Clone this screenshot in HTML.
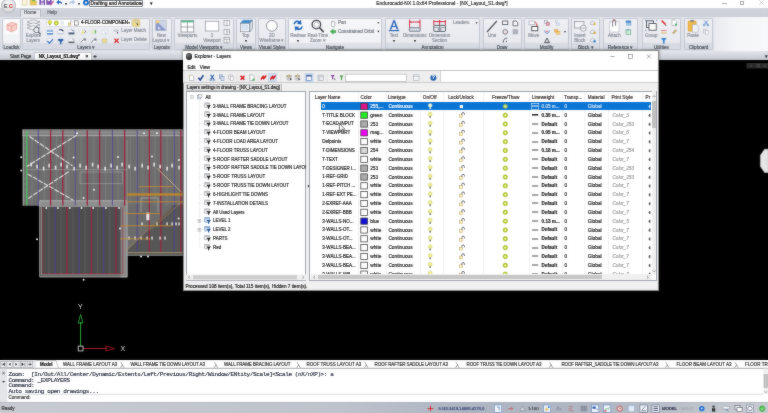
<!DOCTYPE html><html><head><meta charset="utf-8"><title>Endurocadd-NX</title><style>
*{margin:0;padding:0;box-sizing:border-box}
html,body{width:768px;height:413px;overflow:hidden;background:#000}
#pg{position:absolute;left:0;top:0;width:768px;height:413px;}
#ov{position:absolute;left:0;top:0;width:768px;height:413px;backdrop-filter:blur(0.8px);-webkit-backdrop-filter:blur(0.8px);opacity:0.35;pointer-events:none}
body{position:relative;will-change:transform;font-family:"Liberation Sans",sans-serif;font-size:4.5px;color:#222;line-height:1}
.a{position:absolute}
.t{position:absolute;white-space:nowrap;line-height:1;-webkit-text-stroke:0.18px currentColor}
.m{position:absolute;white-space:pre;line-height:1;font-family:"Liberation Mono",monospace;-webkit-text-stroke:0.15px currentColor}
#title{left:0;top:0;width:768px;height:7.5px;background:#fff}
#tabs{left:0;top:7.5px;width:768px;height:9px;background:linear-gradient(#d2d5dc,#cbced6)}
#ribbon{left:0;top:16.5px;width:768px;height:34.5px;background:linear-gradient(#e3e5eb,#dadde4)}
.panel{position:absolute;top:17.5px;height:32.8px;background:linear-gradient(#eff0f4 0,#e7e9ee 78%,#d8dbe3 80%,#d6dae2 100%);border:0.5px solid #c4c8d1;border-radius:1.2px}
#doctabs{left:0;top:51px;width:768px;height:8.7px;background:linear-gradient(#e2e5ea,#c4c8d1)}
</style></head><body><div id="pg">
<div id="title" class="a"></div>
<div id="tabs" class="a"></div>
<div id="ribbon" class="a"></div>
<div class="a" style="left:714.00px;top:16.50px;width:54.00px;height:34.50px;background:linear-gradient(90deg,#e8eaef,#f4f5f7 40%,#f7f8fa);"></div>
<div class="a" style="left:19.00px;top:0.00px;width:126.00px;height:6.60px;background:#f7f8fa;border-radius:0 0 2px 2px"></div>
<svg class="a" style="left:0;top:0" width="100" height="8" viewBox="0 0 100 8"><path d="M22.4 -1h3l1.6 1.6v4.4h-4.6z" fill="#fbf6dc" stroke="#c8b870" stroke-width="0.5"/><path d="M30.2 0h2.4l.8 1h3v4h-6.2z" fill="#eccb5a" stroke="#b89a30" stroke-width="0.4"/><path d="M32 -1.4l2.8-.4.6 2.6-2.8.4z" fill="#58b04a"/><rect x="39.8" y="-0.6" width="5" height="5.4" fill="#7b4fb0" stroke="#56308a" stroke-width="0.4"/><rect x="41" y="-0.6" width="2.6" height="2" fill="#e9e2f4"/><rect x="40.8" y="2.6" width="3" height="2.2" fill="#d8cdea"/><rect x="46.6" y="-0.6" width="4.6" height="5" fill="#7b4fb0" stroke="#56308a" stroke-width="0.4"/><rect x="47.6" y="-0.6" width="2.4" height="1.8" fill="#e9e2f4"/><path d="M50 5l3-4.4 1 .8-3 4.2z" fill="#c84a9a"/><path d="M56.4 2.2l2.4-2.6v1.6c2.4-.2 3.6 1 3.4 3.6-.6-1.4-1.6-2-3.4-1.8v1.8z" fill="#1f5fb4"/><path d="M75 2.2l-2.4-2.6v1.6c-2.4-.2-3.6 1-3.4 3.6.6-1.4 1.6-2 3.4-1.8v1.8z" fill="#a9c4e4"/><circle cx="86" cy="2.6" r="3" fill="#1f6fc8"/><circle cx="86" cy="2.6" r="1.1" fill="#e8f0fa"/></svg>
<div class="t" style="left:-34.50px;width:200px;text-align:center;top:2px;font-size:4px;color:#222;">▾</div>
<div class="t" style="left:-21.40px;width:200px;text-align:center;top:2px;font-size:4px;color:#222;">▾</div>
<div class="a" style="left:88.60px;top:0.30px;width:54.60px;height:6.90px;background:#fff;border:0.5px solid #7a808a;border-radius:1px"></div>
<div class="t" style="left:90.40px;top:2px;font-size:4.9px;color:#111;">Drafting and Annotation</div>
<div class="t" style="left:41.00px;width:200px;text-align:center;top:2px;font-size:4px;color:#111;">▾</div>
<div class="t" style="left:51.00px;width:200px;text-align:center;top:1px;font-size:5px;color:#111;">▾</div>
<div class="a" style="left:1px;top:-1.6px;width:15px;height:15px;border-radius:50%;background:radial-gradient(circle at 50% 40%,#fff,#d9dbe0 70%,#b9bcc4);border:0.5px solid #aeb2bb"></div>
<div class="t" style="left:-94.40px;width:200px;text-align:center;top:4px;font-size:5.6px;color:#6a6a6e;font-weight:bold">E</div>
<div class="t" style="left:-89.20px;width:200px;text-align:center;top:4px;font-size:5.6px;color:#d03a36;font-weight:bold">C</div>
<div class="t" style="left:342.00px;width:200px;text-align:center;top:2px;font-size:4.9px;color:#333;">Endurocadd-NX 1.0x64 Professional - [NX_Layout_S1.dwg*]</div>
<div class="a" style="left:721.50px;top:2.60px;width:5.00px;height:0.60px;background:#aaa;"></div>
<div class="a" style="left:740.00px;top:0.80px;width:4.00px;height:4.00px;background:transparent;border:0.55px solid #aaa"></div>
<svg class="a" style="left:758.50px;top:0.30px" width="5" height="5" viewBox="0 0 5 5"><path d="M0.3 0.3L4.7 4.7M4.7 0.3L0.3 4.7" stroke="#aaa" stroke-width="0.55"/></svg>
<div class="a" style="left:20.00px;top:9.00px;width:20.50px;height:7.60px;background:#e6e8ed;border-radius:1.2px 1.2px 0 0;border:0.4px solid #b4b9c4;border-bottom:none"></div>
<div class="t" style="left:-69.80px;width:200px;text-align:center;top:11px;font-size:4.7px;color:#5a5f68;">Home</div>
<div class="t" style="left:-48.00px;width:200px;text-align:center;top:11px;font-size:4.7px;color:#5a5f68;">Help</div>
<div class="panel" style="left:2px;width:19.2px;background:linear-gradient(#f6f7f9 0,#f1f2f5 78%,#dfe2e8 80%,#dde0e6 100%)"></div>
<div class="t" style="left:-88.40px;width:200px;text-align:center;top:46px;font-size:4.6px;color:#4c515a;">Loadlok</div>
<div class="panel" style="left:22.2px;width:128.0px"></div>
<div class="t" style="left:-13.80px;width:200px;text-align:center;top:46px;font-size:4.6px;color:#4c515a;">Layers ▾</div>
<div class="panel" style="left:152px;width:19.6px"></div>
<div class="t" style="left:61.80px;width:200px;text-align:center;top:46px;font-size:4.6px;color:#4c515a;">Layouts</div>
<div class="panel" style="left:174.2px;width:60.2px"></div>
<div class="t" style="left:104.30px;width:200px;text-align:center;top:46px;font-size:4.6px;color:#4c515a;">Model Viewports ▾</div>
<div class="panel" style="left:236.2px;width:19.6px"></div>
<div class="t" style="left:146.00px;width:200px;text-align:center;top:46px;font-size:4.6px;color:#4c515a;">Views</div>
<div class="panel" style="left:257.8px;width:28.6px"></div>
<div class="t" style="left:172.10px;width:200px;text-align:center;top:46px;font-size:4.6px;color:#4c515a;">Visual Styles</div>
<div class="panel" style="left:288.2px;width:93.4px;background:linear-gradient(#f6f7f9 0,#f1f2f5 78%,#dfe2e8 80%,#dde0e6 100%)"></div>
<div class="t" style="left:234.90px;width:200px;text-align:center;top:46px;font-size:4.6px;color:#4c515a;">Navigate</div>
<div class="panel" style="left:384.6px;width:95.8px"></div>
<div class="t" style="left:332.50px;width:200px;text-align:center;top:46px;font-size:4.6px;color:#4c515a;">Annotation</div>
<div class="panel" style="left:482.6px;width:39.0px"></div>
<div class="t" style="left:402.10px;width:200px;text-align:center;top:46px;font-size:4.6px;color:#4c515a;">Draw</div>
<div class="panel" style="left:524.4px;width:44.2px"></div>
<div class="t" style="left:446.50px;width:200px;text-align:center;top:46px;font-size:4.6px;color:#4c515a;">Modify</div>
<div class="panel" style="left:571.2px;width:29.2px"></div>
<div class="t" style="left:485.80px;width:200px;text-align:center;top:46px;font-size:4.6px;color:#4c515a;">Block ▾</div>
<div class="panel" style="left:603.2px;width:34.8px"></div>
<div class="t" style="left:520.60px;width:200px;text-align:center;top:46px;font-size:4.6px;color:#4c515a;">Reference ▾</div>
<div class="panel" style="left:641.6px;width:39.6px"></div>
<div class="t" style="left:561.40px;width:200px;text-align:center;top:46px;font-size:4.6px;color:#4c515a;">Utilities</div>
<div class="panel" style="left:684px;width:29.2px"></div>
<div class="t" style="left:598.60px;width:200px;text-align:center;top:46px;font-size:4.6px;color:#4c515a;">Clipboard</div>
<svg class="a" style="left:0;top:0.5px" width="768" height="52" viewBox="0 0 768 52"><rect x="4.6" y="18.6" width="14" height="14.4" rx="1" fill="#fbfbfc"/><path d="M7 23.5l5-2.2 4.6 1.6v5.4l-5 2.5-4.6-2z" fill="#f8cfc9" stroke="#e38a82" stroke-width="0.6"/><path d="M7 23.5l4.6 1.8 5-2.4M11.6 25.3v5.5" fill="none" stroke="#e38a82" stroke-width="0.6"/><rect x="8.4" y="25.6" width="2" height="1.6" fill="#fff" stroke="#e38a82" stroke-width="0.3"/><path d="M27 21l6.4-2.2 6.6 2.2-6.6 2.2z" fill="#f6f7f9" stroke="#747a86" stroke-width="0.55"/><path d="M27 23.9l6.4-2.2 6.6 2.2-6.6 2.2z" fill="#f6f7f9" stroke="#747a86" stroke-width="0.55"/><path d="M27 26.8l6.4-2.2 6.6 2.2-6.6 2.2z" fill="#f6f7f9" stroke="#747a86" stroke-width="0.55"/><circle cx="36.4" cy="29" r="2.7" fill="#eef1f5" stroke="#50565f" stroke-width="0.8"/><path d="M38.4 31l2.2 2.2" stroke="#50565f" stroke-width="1.1"/><rect x="46.6" y="18.8" width="84.6" height="6.4" fill="#fff" stroke="#b6bbc6" stroke-width="0.4"/><circle cx="49.8" cy="21.3" r="1.8" fill="#eef03a" stroke="#8a9020" stroke-width="0.45"/><rect x="49.1" y="22.8" width="1.4" height="1.3" fill="#8a8a70"/><circle cx="56.3" cy="22" r="2.1" fill="#cfe01a" stroke="#6f8a10" stroke-width="0.5"/><circle cx="56.3" cy="22" r="0.7" fill="#f5f9c0"/><path d="M61 20.5h2.4v3h-2.4z" fill="#e6e8ec" stroke="#c4c8d0" stroke-width="0.3"/><rect x="68.4" y="22" width="2.6" height="2.2" fill="#e8d98a" stroke="#8a7a30" stroke-width="0.3"/><path d="M70.4 22v-1.2a1 1 0 0 1 2 0" fill="none" stroke="#666" stroke-width="0.4"/><rect x="74.4" y="19.9" width="3.8" height="4.2" fill="#fff" stroke="#333" stroke-width="0.5"/><path d="M128 21.3h2.2l-1.1 1.6z" fill="#222"/><rect x="132.6" y="18.6" width="7.2" height="6.8" rx="0.8" fill="#f0dc8a" stroke="#c9ac4a" stroke-width="0.4"/><path d="M134 20.5l2.2-.8 2.2.8-2.2.8z" fill="#fff" stroke="#667" stroke-width="0.3"/><path d="M136.3 21.8l1 2.6.6-1 1 .1z" fill="#334"/><path d="M46.8 29.8l3.2-1.6 3.2 1.6v2.4l-3.2 1.6-3.2-1.6z" fill="#fbfcfe" stroke="#a9b3c4" stroke-width="0.4" opacity="1"/><path d="M47 29.400000000000002h6v1.2h-6zM47 32.2h6v1.3h-6z" fill="#3274c2"/><path d="M57.5 29.8l3.2-1.6 3.2 1.6v2.4l-3.2 1.6-3.2-1.6z" fill="#fbfcfe" stroke="#a9b3c4" stroke-width="0.4" opacity="1"/><path d="M59.1 28.400000000000002c2-.6 4-.2 4.6 1.6l-1 .4c-.8-1-2-1.4-3.6-1z" fill="#26344e"/><path d="M57.7 32.4h5.4" stroke="#8d9bb4" stroke-width="0.6"/><path d="M68.2 29.8l3.2-1.6 3.2 1.6v2.4l-3.2 1.6-3.2-1.6z" fill="#fbfcfe" stroke="#a9b3c4" stroke-width="0.4" opacity="1"/><path d="M68.60000000000001 31.400000000000002h5.8v2h-5.8z" fill="#4a5a78"/><path d="M71.4 28.8l2.6 1.6" stroke="#4a5a78" stroke-width="0.7"/><path d="M79.7 29.8l3.2-1.6 3.2 1.6v2.4l-3.2 1.6-3.2-1.6z" fill="#fbfcfe" stroke="#a9b3c4" stroke-width="0.4" opacity="0.8"/><circle cx="82.9" cy="31.2" r="1.5" fill="#e9df8a"/><path d="M84.30000000000001 29.2l1.6 1.4-1.6 1" fill="none" stroke="#4a5060" stroke-width="0.6"/><path d="M90.3 29.8l3.2-1.6 3.2 1.6v2.4l-3.2 1.6-3.2-1.6z" fill="#fbfcfe" stroke="#a9b3c4" stroke-width="0.4" opacity="0.8"/><circle cx="92.9" cy="31.0" r="1.5" fill="#dfe6a8"/><path d="M95.3 29.0v3.6" stroke="#5aa848" stroke-width="1.1"/><path d="M101.39999999999999 29.8l3.2-1.6 3.2 1.6v2.4l-3.2 1.6-3.2-1.6z" fill="#fbfcfe" stroke="#a9b3c4" stroke-width="0.4" opacity="0.7"/><path d="M103.6 30.2l2 1.6v1.6" fill="none" stroke="#a9c4e4" stroke-width="0.9"/><path d="M46.8 38.7l3.2-1.6 3.2 1.6v2.4l-3.2 1.6-3.2-1.6z" fill="#fbfcfe" stroke="#a9b3c4" stroke-width="0.4" opacity="1"/><path d="M47.4 39.900000000000006l2 2.2 3.4-3.8" fill="none" stroke="#2a6cc0" stroke-width="1.2"/><path d="M57.5 38.7l3.2-1.6 3.2 1.6v2.4l-3.2 1.6-3.2-1.6z" fill="#fbfcfe" stroke="#a9b3c4" stroke-width="0.4" opacity="1"/><path d="M58.1 37.900000000000006h5.2v1.6l-1.8 1.4v2l-1.4.6v-2.6l-2-1.4z" fill="#2c5ea8"/><path d="M68.2 38.7l3.2-1.6 3.2 1.6v2.4l-3.2 1.6-3.2-1.6z" fill="#fbfcfe" stroke="#a9b3c4" stroke-width="0.4" opacity="1"/><path d="M68.60000000000001 40.5h5.8v1.6h-5.8z" fill="#59616e"/><path d="M72.4 38.1l1.8 1.6" stroke="#59616e" stroke-width="0.6"/><path d="M79.7 38.7l3.2-1.6 3.2 1.6v2.4l-3.2 1.6-3.2-1.6z" fill="#fbfcfe" stroke="#a9b3c4" stroke-width="0.4" opacity="0.8"/><path d="M80.9 41.5l2.2-2.8 2.4.6M85.5 39.300000000000004l-.2-1.6-1.6.6" fill="none" stroke="#4e5564" stroke-width="0.8"/><path d="M90.3 38.7l3.2-1.6 3.2 1.6v2.4l-3.2 1.6-3.2-1.6z" fill="#fbfcfe" stroke="#a9b3c4" stroke-width="0.4" opacity="0.8"/><path d="M91.5 41.5l2.2-2.8 2.4.6M96.1 39.300000000000004l-.2-1.6-1.6.6" fill="none" stroke="#4e5564" stroke-width="0.8"/><path d="M101.39999999999999 38.7l3.2-1.6 3.2 1.6v2.4l-3.2 1.6-3.2-1.6z" fill="#fbfcfe" stroke="#a9b3c4" stroke-width="0.4" opacity="0.8"/><rect x="102.6" y="38.1" width="4" height="3.6" fill="#ecd98c" stroke="#c9b060" stroke-width="0.4"/><path d="M113.8 29.6l2.4-1 2.4 1-2.4 1z" fill="#eef1f6" stroke="#6f7b90" stroke-width="0.4"/><path d="M116.6 30.6l1 2.4.5-.9 1 .1z" fill="#445"/><path d="M114.4 37.6l4.2 4.2M118.6 37.6l-4.2 4.2" stroke="#d8262c" stroke-width="1.3"/><rect x="155.6" y="19.2" width="10.6" height="10.6" fill="#cdd5e6" stroke="#a0a9bc" stroke-width="0.5"/><path d="M156.4 20.4l9 8.6h-9z" fill="#8a98cc" stroke="#6a78aa" stroke-width="0.4"/><path d="M156 19.6h4l-1.2 2.4-2.8.4z" fill="#f0d27a"/><path d="M158 25.2l3.2 3h-3.2z" fill="#dfe5f2"/><rect x="181" y="19.4" width="12.8" height="11.6" fill="#fff" stroke="#666c76" stroke-width="0.6"/><rect x="181.3" y="19.7" width="12.2" height="1.7" fill="#4fb58a"/><path d="M187.4 21.4v9.6M181 26h12.8" stroke="#666c76" stroke-width="0.6"/><rect x="205.4" y="20.2" width="13.4" height="9.8" fill="#fff" stroke="#7a808b" stroke-width="0.6"/><rect x="224" y="19.299999999999997" width="5.6" height="5.2" fill="#fbfbfd" stroke="#6e747f" stroke-width="0.5"/><path d="M226.8 19.299999999999997v5.2" stroke="#6e747f" stroke-width="0.5"/><rect x="224" y="28.299999999999997" width="5.6" height="5.2" fill="#fbfbfd" stroke="#6e747f" stroke-width="0.5"/><path d="M226.8 28.299999999999997v5.2M226.8 30.9h2.8" stroke="#6e747f" stroke-width="0.5"/><rect x="224" y="36.699999999999996" width="5.6" height="5.2" fill="#fbfbfd" stroke="#6e747f" stroke-width="0.5"/><path d="M226.8 38.3v3.6M224 38.3h5.6" stroke="#6e747f" stroke-width="0.5"/><path d="M240.4 22.2l2.6-3h9.4l-2.6 3z" fill="#3f8fd2" stroke="#2a6fae" stroke-width="0.4"/><rect x="240.4" y="22.2" width="9.4" height="8.6" fill="#f3f6fa" stroke="#5a6373" stroke-width="0.5"/><path d="M249.8 22.2l2.6-3v8.4l-2.6 3.2z" fill="#dfe5ee" stroke="#5a6373" stroke-width="0.5"/><rect x="242.4" y="24" width="5" height="4.6" fill="#dbe6f3" stroke="#9fb2cc" stroke-width="0.3"/><circle cx="271.8" cy="24.8" r="5.4" fill="#fdfdfe" stroke="#666b74" stroke-width="0.7"/><path d="M293.4 23.2c.4-3 3.4-4.6 6.2-3l1.2-1.4.8 4.6-4.6-.4 1.2-1.3c-1.4-.8-2.8-.2-3.2 1.5z" fill="#1a63b8"/><path d="M302.8 25.6c-.4 3-3.4 4.6-6.2 3l-1.2 1.4-.8-4.6 4.6.4-1.2 1.3c1.4.8 2.8.2 3.2-1.5z" fill="#1a63b8"/><circle cx="316.4" cy="23.6" r="4.3" fill="#eef0f3" stroke="#484c54" stroke-width="1.3"/><circle cx="316.4" cy="23.6" r="2.4" fill="#fff" stroke="#9aa0aa" stroke-width="0.5"/><path d="M319.8 27l3.4 3.6" stroke="#484c54" stroke-width="1.8" stroke-linecap="round"/><path d="M331.4 24v-3.2h.9v-.7h.9v.4h.9v.5h.8v3.4l-.7 1.2h-2.2z" fill="#fff" stroke="#555" stroke-width="0.4"/><path d="M330.2 30.6l3-2.6v1.4h2.6v2.4h-2.6v1.4z" fill="#3fae4f" stroke="#2a8438" stroke-width="0.3"/><path d="M377.3 21.2h2.2l-1.1 1.6z" fill="#222"/><path d="M377.3 29.8h2.2l-1.1 1.6z" fill="#222"/><path d="M390 28.6l3.6-9.4h1l3.6 9.4h-1.5l-.9-2.6h-3.5l-.9 2.6zM392.7 24.9h2.7l-1.35-3.9z" fill="#2a62b8"/><rect x="388.8" y="29" width="10.4" height="1.2" fill="#2a62b8"/><path d="M390 28.6l3.6-9.4h1l3.6 9.4" fill="none" stroke="#2a62b8" stroke-width="0.5"/><path d="M409.6 18.6v8.2M420 18.6v8.2M409.6 21h10.4" stroke="#d42c44" stroke-width="1" fill="none"/><path d="M409.6 21l1.6-1v2zM420 21l-1.6-1v2z" fill="#d42c44"/><rect x="409.4" y="26.8" width="10.8" height="3.4" rx="0.5" fill="#dfe3ec" stroke="#4f5766" stroke-width="0.8"/><path d="M433.8 19v5M439.6 19v5M445.4 19v5M433.8 20.6h11.6" stroke="#d42c44" stroke-width="1" fill="none"/><path d="M437 20.6l1.4-.8v1.6zM442.2 20.6l-1.4-.8v1.6z" fill="#d42c44"/><rect x="433.8" y="24.4" width="11.6" height="6" rx="0.5" fill="#eef0f4" stroke="#3f4653" stroke-width="0.85"/><path d="M433.8 26.4h11.6M439.6 24.4v6" stroke="#4f5663" stroke-width="0.5"/><rect x="437.6" y="27.4" width="4" height="2" fill="#8a92a2"/><path d="M475.5 21.3h2.2l-1.1 1.6z" fill="#444"/><path d="M487 31l9.8-11" stroke="#555a64" stroke-width="1.3"/><rect x="502.6" y="20" width="5.2" height="3.6" fill="#fbfbfd" stroke="#4a4f5a" stroke-width="0.8"/><path d="M513 20h3l1.8 1.6v3.2h-4.8z" fill="#fbfbfd" stroke="#4a4f5a" stroke-width="0.8"/><circle cx="505.2" cy="30.9" r="2.3" fill="#fbfbfd" stroke="#4a4f5a" stroke-width="0.8"/><circle cx="505.2" cy="30.9" r="0.5" fill="#d04040"/><rect x="513" y="28.6" width="4.8" height="4.4" fill="#c8ccd4" stroke="#7f8591" stroke-width="0.4"/><path d="M513 30.1h4.8M513 31.6h4.8M514.6 28.6v4.4M516.2 28.6v4.4" stroke="#7f8591" stroke-width="0.3"/><path d="M503.2 41.6c0-3 1.4-4.4 4-4.6" fill="none" stroke="#4a4f5a" stroke-width="0.9"/><circle cx="506.4" cy="40.4" r="0.6" fill="#555b66"/><rect x="529" y="20" width="5.6" height="3.8" fill="#f6f7f9" stroke="#8a909b" stroke-width="0.5"/><rect x="531.8" y="25.6" width="6" height="4.2" fill="#fff" stroke="#2d3038" stroke-width="0.8"/><path d="M535.4 20.6l1.4 3.4" stroke="#d8303c" stroke-width="0.8"/><path d="M536 24.8l1.6-1.2-.2 1.8z" fill="#d8303c"/><rect x="544.4" y="19.6" width="3" height="3" fill="#e8eaf0" stroke="#7a8190" stroke-width="0.4"/><rect x="546.4" y="21.6" width="3" height="3" fill="#d6a0a8" stroke="#b0485a" stroke-width="0.4"/><rect x="555.2" y="19.8" width="2.6" height="2" fill="#eef0f4" stroke="#9aa3b5" stroke-width="0.3"/><rect x="556.8" y="22" width="3" height="2.4" fill="#dfe6f2" stroke="#8fa0c0" stroke-width="0.3"/><path d="M544.9 29.4a2.2 2.2 0 1 0 4.2 0" fill="none" stroke="#3a62b0" stroke-width="0.7"/><circle cx="547" cy="30.4" r="0.7" fill="#d8303c"/><rect x="554.6" y="28.6" width="3.4" height="2.6" fill="#f0b85a" stroke="#c88a2a" stroke-width="0.3"/><rect x="556.4" y="30.4" width="3.6" height="2.8" fill="#f6cf7a" stroke="#c88a2a" stroke-width="0.3"/><path d="M563.9 30.2h2.2l-1.1 1.6z" fill="#222"/><path d="M544.6 41.6l2.4-4.4 2.4 4.4z" fill="#e8eaee" stroke="#3a3f4a" stroke-width="0.9"/><rect x="574.4" y="20.4" width="9.6" height="6.6" fill="#f4f5f8" stroke="#6f7683" stroke-width="0.6"/><circle cx="583.2" cy="27.2" r="3" fill="#f4f5f8" stroke="#6f7683" stroke-width="0.6"/><path d="M581 27.2h4.4" stroke="#6f7683" stroke-width="0.5"/><path d="M590.4 23.5v-2.2l2.2-1.4 2.4 1.4v2.2z" fill="#e9ecf2" stroke="#7f8796" stroke-width="0.4"/><circle cx="594.6" cy="22.9" r="1.2" fill="#e8b84a"/><path d="M590.4 32.5v-2.2l2.2-1.4 2.4 1.4v2.2z" fill="#e9ecf2" stroke="#7f8796" stroke-width="0.4"/><circle cx="594.6" cy="31.9" r="1.2" fill="#d8a83a"/><path d="M590.4 40.9v-2.2l2.2-1.4 2.4 1.4v2.2z" fill="#e9ecf2" stroke="#7f8796" stroke-width="0.4"/><circle cx="594.6" cy="40.3" r="1.2" fill="#3a8ad8"/><rect x="609.6" y="20.8" width="9.4" height="10.2" fill="#fdfdfe" stroke="#a6acb8" stroke-width="0.5"/><path d="M612.6 25.6v-5.2a1.5 1.5 0 0 1 3 0v4.4" fill="none" stroke="#5a606c" stroke-width="0.8"/><rect x="613.4" y="18.6" width="1.4" height="1.4" fill="#c8404a"/><rect x="625.8" y="19.6" width="5.2" height="2" fill="#3a7ec8"/><rect x="626.8" y="21.8" width="4.2" height="2.4" fill="#9fc0e4" stroke="#3a7ec8" stroke-width="0.3"/><rect x="626" y="28.8" width="4.8" height="4.4" fill="#d0ead8" stroke="#3f9a6a" stroke-width="0.5"/><path d="M626.4 29.6a2 2 0 0 1 3 0" stroke="#2f7ab8" stroke-width="0.6" fill="none"/><rect x="646.4" y="19.8" width="7.2" height="6.6" fill="#e3e6ec" stroke="#3e434d" stroke-width="0.8"/><rect x="649" y="22.6" width="7.2" height="6.6" fill="#fff" stroke="#3e434d" stroke-width="0.8"/><rect x="645.2" y="18.8" width="1" height="1" fill="#4a6ab0"/><rect x="656.4" y="18.8" width="1" height="1" fill="#4a6ab0"/><rect x="645.2" y="29" width="1" height="1" fill="#4a6ab0"/><path d="M661.6 19.6l4 4" stroke="#d8303c" stroke-width="1.5"/><path d="M665.6 23.6l1 1.2-1.6-.4z" fill="#333"/><path d="M661 29.6h5.6" stroke="#d8303c" stroke-width="0.6"/><path d="M661 32h5.6" stroke="#e0a83a" stroke-width="0.8"/><path d="M661 37h5.6l-2 2.4v3h-1.6v-3z" fill="#2f7fd0"/><path d="M672 18.8h3l1.6 1.6v4.2h-4.6z" fill="#fff" stroke="#6a707c" stroke-width="0.4"/><circle cx="676" cy="23.6" r="1.1" fill="#3fae5a"/><path d="M672.4 31.8l3.6-3.2.8.8-3 3.4z" fill="#c8b06a" stroke="#8a7a40" stroke-width="0.3"/><rect x="688" y="20" width="8.2" height="10.2" rx="0.6" fill="#efb84a" stroke="#c98f2a" stroke-width="0.4"/><rect x="690.4" y="19" width="3.4" height="1.8" fill="#7a7f8a"/><path d="M692.4 23.4h4l2 2v5.8h-6z" fill="#eef2f8" stroke="#8a95aa" stroke-width="0.4"/><path d="M704 19.4l3.6 4M708 19.4l-3.6 4" stroke="#2f6fc0" stroke-width="0.7"/><circle cx="704.2" cy="24" r="0.9" fill="none" stroke="#2f6fc0" stroke-width="0.6"/><circle cx="707.8" cy="24" r="0.9" fill="none" stroke="#2f6fc0" stroke-width="0.6"/><rect x="703.6" y="28.2" width="3.2" height="3.8" fill="#e8eaee" stroke="#a0a6b2" stroke-width="0.4"/><rect x="705.2" y="29.6" width="3.2" height="3.8" fill="#f2f3f6" stroke="#a0a6b2" stroke-width="0.4"/></svg>
<div class="t" style="left:-66.70px;width:200px;text-align:center;top:34px;font-size:4.5px;color:#8a909a;">Explore</div>
<div class="t" style="left:-66.70px;width:200px;text-align:center;top:39px;font-size:4.5px;color:#8a909a;">Layers</div>
<div class="t" style="left:81.00px;top:21px;font-size:4.6px;color:#111;letter-spacing:-0.1px">4-FLOOR-COMPONEN</div>
<div class="t" style="left:121.30px;top:29px;font-size:4.5px;color:#8a909a;">Layer Match</div>
<div class="t" style="left:121.30px;top:38px;font-size:4.5px;color:#8a909a;">Layer Delete</div>
<div class="t" style="left:61.40px;width:200px;text-align:center;top:34px;font-size:4.5px;color:#8a909a;">New</div>
<div class="t" style="left:61.40px;width:200px;text-align:center;top:39px;font-size:4.5px;color:#8a909a;">Layout ▾</div>
<div class="t" style="left:87.40px;width:200px;text-align:center;top:34px;font-size:4.5px;color:#8a909a;">Viewports</div>
<div class="t" style="left:112.00px;width:200px;text-align:center;top:34px;font-size:4.5px;color:#8a909a;">1</div>
<div class="t" style="left:112.00px;width:200px;text-align:center;top:39px;font-size:4.5px;color:#8a909a;">Viewport</div>
<div class="t" style="left:145.60px;width:200px;text-align:center;top:34px;font-size:4.5px;color:#8a909a;">Top</div>
<div class="t" style="left:145.60px;width:200px;text-align:center;top:39px;font-size:4px;color:#222;">▾</div>
<div class="t" style="left:171.80px;width:200px;text-align:center;top:34px;font-size:4.5px;color:#8a909a;">2D</div>
<div class="t" style="left:172.00px;width:200px;text-align:center;top:39px;font-size:4.5px;color:#8a909a;">Wireframe ▾</div>
<div class="t" style="left:198.00px;width:200px;text-align:center;top:34px;font-size:4.5px;color:#8a909a;">Redraw</div>
<div class="t" style="left:198.00px;width:200px;text-align:center;top:39px;font-size:4px;color:#222;">▾</div>
<div class="t" style="left:217.80px;width:200px;text-align:center;top:34px;font-size:4.5px;color:#8a909a;">Real-Time</div>
<div class="t" style="left:218.00px;width:200px;text-align:center;top:39px;font-size:4.5px;color:#8a909a;">Zoom ▾</div>
<div class="t" style="left:338.00px;top:21px;font-size:4.6px;color:#727882;">Pan</div>
<div class="t" style="left:338.00px;top:30px;font-size:4.6px;color:#727882;">Constrained Orbit</div>
<div class="t" style="left:294.00px;width:200px;text-align:center;top:34px;font-size:4.5px;color:#8a909a;">Text</div>
<div class="t" style="left:294.00px;width:200px;text-align:center;top:39px;font-size:4px;color:#222;">▾</div>
<div class="t" style="left:314.80px;width:200px;text-align:center;top:34px;font-size:4.5px;color:#8a909a;">Dimensions</div>
<div class="t" style="left:314.80px;width:200px;text-align:center;top:39px;font-size:4px;color:#222;">▾</div>
<div class="t" style="left:339.60px;width:200px;text-align:center;top:34px;font-size:4.5px;color:#8a909a;">Dimension</div>
<div class="t" style="left:339.60px;width:200px;text-align:center;top:39px;font-size:4.5px;color:#8a909a;">Section</div>
<div class="t" style="left:453.00px;top:21px;font-size:4.5px;color:#8a909a;">Leaders</div>
<div class="t" style="left:392.00px;width:200px;text-align:center;top:34px;font-size:4.5px;color:#8a909a;">Line</div>
<div class="t" style="left:433.80px;width:200px;text-align:center;top:34px;font-size:4.5px;color:#8a909a;">Move</div>
<div class="t" style="left:479.80px;width:200px;text-align:center;top:34px;font-size:4.5px;color:#8a909a;">Insert</div>
<div class="t" style="left:479.80px;width:200px;text-align:center;top:39px;font-size:4.5px;color:#8a909a;">Block</div>
<div class="t" style="left:514.40px;width:200px;text-align:center;top:34px;font-size:4.5px;color:#8a909a;">Attach</div>
<div class="t" style="left:551.20px;width:200px;text-align:center;top:34px;font-size:4.5px;color:#8a909a;">Group</div>
<div class="t" style="left:593.00px;width:200px;text-align:center;top:34px;font-size:4.5px;color:#8a909a;">Paste</div>
<div id="doctabs" class="a"></div>
<div class="t" style="left:10.00px;top:55px;font-size:4.5px;color:#333;">Start Page</div>
<div class="a" style="left:34.00px;top:52.20px;width:57.50px;height:7.50px;background:linear-gradient(#ffffff,#f2f3f5);border:0.4px solid #c2c6ce;border-bottom:none;border-radius:1px 1px 0 0"></div>
<div class="t" style="left:38.70px;top:55px;font-size:4.5px;color:#111;font-weight:bold;letter-spacing:-0.15px">NX_Layout_S1.dwg*</div>
<div class="t" style="left:-13.20px;width:200px;text-align:center;top:54px;font-size:5.5px;color:#222;">×</div>
<div class="t" style="left:-5.00px;width:200px;text-align:center;top:53px;font-size:6px;color:#222;font-weight:bold">+</div>
<div class="t" style="left:666.00px;width:200px;text-align:center;top:55px;font-size:4.5px;color:#222;">▾</div>
<svg class="a" style="left:0;top:0" width="768" height="361" viewBox="0 0 768 361"><rect x="22.4" y="129.4" width="300" height="76.4" fill="#6e6e6e"/><rect x="22.4" y="129.4" width="300" height="6.4" fill="#838383"/><path d="M22.4 135.7h300" stroke="#b8b8b8" stroke-width="0.8"/><path d="M22.4 132.4h300" stroke="#9c9c9c" stroke-width="0.5"/><rect x="126" y="205" width="100" height="50.6" fill="#565656"/><path d="M127 205h46l-46 46z" fill="#6c6c6c"/><path d="M127 252.6h60" stroke="#c0a878" stroke-width="0.7"/><path d="M127 255.2h60" stroke="#c4c4c4" stroke-width="0.6"/><rect x="39.4" y="200.4" width="88" height="77" fill="#4e4e4e"/><rect x="39.4" y="200.4" width="88" height="6.6" fill="#8e8e8e"/><rect x="120.6" y="200.4" width="6.8" height="77" fill="#868686"/><path d="M39.8 200.8h87.2v76h-87.2z" fill="none" stroke="#bcbcbc" stroke-width="0.8"/><path d="M41.6 207.2v67.6h82.4v-67.6" fill="none" stroke="#a0a0a0" stroke-width="0.5"/><path d="M42.8 207.4v66.2h80v-66.2" fill="none" stroke="#a82038" stroke-width="0.7" opacity="0.85"/><path d="M31.9 134.6v71" stroke="#929292" stroke-width="0.6" opacity="0.6"/><path d="M38.0 134.6v71" stroke="#929292" stroke-width="0.6" opacity="0.6"/><path d="M44.2 134.6v71" stroke="#929292" stroke-width="0.6" opacity="0.6"/><path d="M50.3 134.6v71" stroke="#929292" stroke-width="0.6" opacity="0.6"/><path d="M56.5 134.6v71" stroke="#929292" stroke-width="0.6" opacity="0.6"/><path d="M62.6 134.6v71" stroke="#929292" stroke-width="0.6" opacity="0.6"/><path d="M68.8 134.6v71" stroke="#929292" stroke-width="0.6" opacity="0.6"/><path d="M75.0 134.6v71" stroke="#929292" stroke-width="0.6" opacity="0.6"/><path d="M81.1 134.6v71" stroke="#929292" stroke-width="0.6" opacity="0.6"/><path d="M87.3 134.6v71" stroke="#929292" stroke-width="0.6" opacity="0.6"/><path d="M93.4 134.6v71" stroke="#929292" stroke-width="0.6" opacity="0.6"/><path d="M99.6 134.6v71" stroke="#929292" stroke-width="0.6" opacity="0.6"/><path d="M105.7 134.6v71" stroke="#929292" stroke-width="0.6" opacity="0.6"/><path d="M111.9 134.6v71" stroke="#929292" stroke-width="0.6" opacity="0.6"/><path d="M118.0 134.6v71" stroke="#929292" stroke-width="0.6" opacity="0.6"/><path d="M124.2 134.6v71" stroke="#929292" stroke-width="0.6" opacity="0.6"/><path d="M130.3 134.6v71" stroke="#929292" stroke-width="0.6" opacity="0.6"/><path d="M136.5 134.6v71" stroke="#929292" stroke-width="0.6" opacity="0.6"/><path d="M142.6 134.6v71" stroke="#929292" stroke-width="0.6" opacity="0.6"/><path d="M148.8 134.6v71" stroke="#929292" stroke-width="0.6" opacity="0.6"/><path d="M154.9 134.6v71" stroke="#929292" stroke-width="0.6" opacity="0.6"/><path d="M161.1 134.6v71" stroke="#929292" stroke-width="0.6" opacity="0.6"/><path d="M167.2 134.6v71" stroke="#929292" stroke-width="0.6" opacity="0.6"/><path d="M173.4 134.6v71" stroke="#929292" stroke-width="0.6" opacity="0.6"/><path d="M179.5 134.6v71" stroke="#929292" stroke-width="0.6" opacity="0.6"/><path d="M185.7 134.6v71" stroke="#929292" stroke-width="0.6" opacity="0.6"/><path d="M50.6 130v75.6" stroke="#9c2440" stroke-width="1.3"/><path d="M62.8 130v75.6" stroke="#9c2440" stroke-width="1.3"/><path d="M87.3 130v75.6" stroke="#9c2440" stroke-width="1.3"/><path d="M99.6 130v75.6" stroke="#9c2440" stroke-width="1.3"/><path d="M124.6 130v75.6" stroke="#9c2440" stroke-width="1.3"/><path d="M149.3 130v75.6" stroke="#9c2440" stroke-width="1.3"/><path d="M160.8 130v75.6" stroke="#9c2440" stroke-width="1.3"/><path d="M180.8 130v75.6" stroke="#9c2440" stroke-width="1.3"/><path d="M38.3 130v75.6" stroke="#4e3e94" stroke-width="0.9" opacity="0.9"/><path d="M75.2 130v75.6" stroke="#4e3e94" stroke-width="0.9" opacity="0.9"/><path d="M112.4 130v75.6" stroke="#4e3e94" stroke-width="0.9" opacity="0.9"/><path d="M137.2 130v75.6" stroke="#4e3e94" stroke-width="0.9" opacity="0.9"/><path d="M174.2 130v75.6" stroke="#4e3e94" stroke-width="0.9" opacity="0.9"/><path d="M67 207v67" stroke="#9c2440" stroke-width="1.2"/><path d="M91.3 207v67" stroke="#9c2440" stroke-width="1.2"/><path d="M116 207v67" stroke="#9c2440" stroke-width="1.2"/><path d="M41.6 207.2v67.6h79" fill="none" stroke="#a0a0a0" stroke-width="0.5"/><path d="M55 207v67" stroke="#4e3e94" stroke-width="0.9"/><path d="M79 207v67" stroke="#4e3e94" stroke-width="0.9"/><path d="M103.7 207v67" stroke="#4e3e94" stroke-width="0.9"/><path d="M48.9 207v67" stroke="#7a7a7a" stroke-width="0.6" opacity="0.55"/><path d="M61 207v67" stroke="#7a7a7a" stroke-width="0.6" opacity="0.55"/><path d="M73 207v67" stroke="#7a7a7a" stroke-width="0.6" opacity="0.55"/><path d="M85.1 207v67" stroke="#7a7a7a" stroke-width="0.6" opacity="0.55"/><path d="M97.5 207v67" stroke="#7a7a7a" stroke-width="0.6" opacity="0.55"/><path d="M109.8 207v67" stroke="#7a7a7a" stroke-width="0.6" opacity="0.55"/><path d="M121 207v67" stroke="#7a7a7a" stroke-width="0.6" opacity="0.55"/><path d="M137.2 205v47" stroke="#4e3e94" stroke-width="0.9"/><path d="M174.2 205v47" stroke="#4e3e94" stroke-width="0.9"/><path d="M149.3 205v47" stroke="#9c2440" stroke-width="1.2"/><path d="M160.8 205v47" stroke="#9c2440" stroke-width="1.2"/><path d="M180.8 205v47" stroke="#9c2440" stroke-width="1.2"/><path d="M23.6 130v75.6" stroke="#c0c0c0" stroke-width="0.6"/><path d="M26.8 130.4v75.2" stroke="#4cc858" stroke-width="1.2"/><path d="M23 136h4" stroke="#4cc858" stroke-width="0.4"/><path d="M23 142h4" stroke="#4cc858" stroke-width="0.4"/><path d="M23 148h4" stroke="#4cc858" stroke-width="0.4"/><path d="M23 154h4" stroke="#4cc858" stroke-width="0.4"/><path d="M23 160h4" stroke="#4cc858" stroke-width="0.4"/><path d="M23 166h4" stroke="#4cc858" stroke-width="0.4"/><path d="M23 172h4" stroke="#4cc858" stroke-width="0.4"/><path d="M23 178h4" stroke="#4cc858" stroke-width="0.4"/><path d="M23 184h4" stroke="#4cc858" stroke-width="0.4"/><path d="M23 190h4" stroke="#4cc858" stroke-width="0.4"/><path d="M23 196h4" stroke="#4cc858" stroke-width="0.4"/><path d="M23 202h4" stroke="#4cc858" stroke-width="0.4"/><path d="M29.6 136.6L72.4 165.8M77 135L27 166.4M27.6 174L73 200M68.6 171.8L27.6 198.8" stroke="#e0dcdc" stroke-width="1.2" stroke-dasharray="5 1.2" fill="none"/><path d="M80 172h42.6v11.6h-42.6zM27 169.6h100M66 171.6v28M127 140v60" fill="none" stroke="#c8c8c8" stroke-width="0.5" opacity="0.7"/><path d="M141 212v-14h17v14" fill="none" stroke="#d0d0d0" stroke-width="0.6" opacity="0.8"/><rect x="30.3" y="162.7" width="1.6" height="3.8" fill="#f2f2f2" opacity="0.9"/><rect x="36.3" y="164.7" width="1.6" height="3.8" fill="#f2f2f2" opacity="0.9"/><rect x="42.8" y="166.7" width="1.6" height="3.8" fill="#f2f2f2" opacity="0.9"/><rect x="48.3" y="163.7" width="1.6" height="3.8" fill="#f2f2f2" opacity="0.9"/><rect x="54.8" y="165.7" width="1.6" height="3.8" fill="#f2f2f2" opacity="0.9"/><rect x="60.3" y="162.7" width="1.6" height="3.8" fill="#f2f2f2" opacity="0.9"/><rect x="66.3" y="164.7" width="1.6" height="3.8" fill="#f2f2f2" opacity="0.9"/><rect x="73.3" y="166.7" width="1.6" height="3.8" fill="#f2f2f2" opacity="0.9"/><rect x="79.3" y="163.7" width="1.6" height="3.8" fill="#f2f2f2" opacity="0.9"/><rect x="85.3" y="165.7" width="1.6" height="3.8" fill="#f2f2f2" opacity="0.9"/><rect x="91.8" y="162.7" width="1.6" height="3.8" fill="#f2f2f2" opacity="0.9"/><rect x="97.3" y="164.7" width="1.6" height="3.8" fill="#f2f2f2" opacity="0.9"/><rect x="104.3" y="166.7" width="1.6" height="3.8" fill="#f2f2f2" opacity="0.9"/><rect x="110.3" y="163.7" width="1.6" height="3.8" fill="#f2f2f2" opacity="0.9"/><rect x="116.3" y="165.7" width="1.6" height="3.8" fill="#f2f2f2" opacity="0.9"/><rect x="121.3" y="162.7" width="1.6" height="3.8" fill="#f2f2f2" opacity="0.9"/><rect x="128.3" y="164.7" width="1.6" height="3.8" fill="#f2f2f2" opacity="0.9"/><rect x="134.3" y="166.7" width="1.6" height="3.8" fill="#f2f2f2" opacity="0.9"/><rect x="141.3" y="163.7" width="1.6" height="3.8" fill="#f2f2f2" opacity="0.9"/><rect x="147.3" y="165.7" width="1.6" height="3.8" fill="#f2f2f2" opacity="0.9"/><rect x="153.3" y="162.7" width="1.6" height="3.8" fill="#f2f2f2" opacity="0.9"/><rect x="159.3" y="164.7" width="1.6" height="3.8" fill="#f2f2f2" opacity="0.9"/><rect x="166.3" y="166.7" width="1.6" height="3.8" fill="#f2f2f2" opacity="0.9"/><rect x="171.3" y="163.7" width="1.6" height="3.8" fill="#f2f2f2" opacity="0.9"/><rect x="178.3" y="165.7" width="1.6" height="3.8" fill="#f2f2f2" opacity="0.9"/><circle cx="46.3" cy="208" r="0.9" fill="#f4f4f4"/><circle cx="58" cy="208" r="0.9" fill="#f4f4f4"/><circle cx="69.8" cy="208" r="0.9" fill="#f4f4f4"/><circle cx="81.5" cy="208" r="0.9" fill="#f4f4f4"/><circle cx="93.2" cy="208" r="0.9" fill="#f4f4f4"/><circle cx="106" cy="208" r="0.9" fill="#f4f4f4"/><circle cx="119" cy="208" r="0.9" fill="#f4f4f4"/><rect x="141.4" y="222.4" width="1.3" height="3" fill="#f2f2f2"/><rect x="156.4" y="222.4" width="1.3" height="3" fill="#f2f2f2"/><rect x="166.4" y="222.4" width="1.3" height="3" fill="#f2f2f2"/><rect x="171.4" y="222.4" width="1.3" height="3" fill="#f2f2f2"/><rect x="175.4" y="222.4" width="1.3" height="3" fill="#f2f2f2"/><rect x="178.4" y="222.4" width="1.3" height="3" fill="#f2f2f2"/><rect x="128.4" y="236.6" width="1.3" height="3" fill="#f2f2f2"/><rect x="134.4" y="236.6" width="1.3" height="3" fill="#f2f2f2"/><rect x="140.4" y="236.6" width="1.3" height="3" fill="#f2f2f2"/><rect x="146.4" y="236.6" width="1.3" height="3" fill="#f2f2f2"/><rect x="151.4" y="236.6" width="1.3" height="3" fill="#f2f2f2"/><rect x="159.4" y="236.6" width="1.3" height="3" fill="#f2f2f2"/><rect x="164.4" y="236.6" width="1.3" height="3" fill="#f2f2f2"/><circle cx="77" cy="133.2" r="1" fill="#f0f0f0"/><circle cx="144" cy="133.3" r="1" fill="#f0f0f0"/><circle cx="157" cy="133.3" r="1" fill="#f0f0f0"/><circle cx="21.2" cy="157.2" r="1" fill="#f0f0f0"/><circle cx="21.2" cy="170.5" r="1" fill="#f0f0f0"/><circle cx="37" cy="239.3" r="1" fill="#f0f0f0"/><circle cx="83.6" cy="279.8" r="1" fill="#f0f0f0"/><circle cx="73.6" cy="157.6" r="1" fill="#f0f0f0"/><circle cx="118" cy="157" r="1" fill="#f0f0f0"/><circle cx="152" cy="156.6" r="1" fill="#f0f0f0"/><circle cx="179" cy="160" r="1" fill="#f0f0f0"/><circle cx="94" cy="189.8" r="1" fill="#f0f0f0"/><circle cx="120" cy="228.6" r="1" fill="#f0f0f0"/><circle cx="178.6" cy="218.4" r="1" fill="#f0f0f0"/><circle cx="83.6" cy="198" r="1" fill="#f0f0f0"/><circle cx="141" cy="256.6" r="1" fill="#f0f0f0"/><circle cx="148" cy="256.6" r="1" fill="#f0f0f0"/><rect x="146.4" y="212.6" width="3" height="7.6" fill="#f4f4f4" opacity="0.95"/><path d="M127 194.5h56" stroke="#c08a28" stroke-width="2.4" opacity="0.9"/><path d="M139 186.6h34M125 213.5h35M120.6 225.8h52M120 238.8h30M126 201.8h57" stroke="#c88c2c" stroke-width="0.9" opacity="0.9"/><path d="M157.2 168.5L181.4 192" stroke="#c8b48c" stroke-width="0.9" fill="none"/><path d="M183 201L150 230M125 251l47-43.4" stroke="#b89050" stroke-width="0.7" fill="none" opacity="0.8"/><path d="M80.6 346v-24" stroke="#30c040" stroke-width="0.9"/><path d="M78.2 323l2.4-8.4 2.4 8.4z" fill="none" stroke="#30c040" stroke-width="0.8"/><path d="M83 348.5h24" stroke="#b81c28" stroke-width="0.9"/><path d="M106 346l8.4 2.5-8.4 2.5z" fill="none" stroke="#b81c28" stroke-width="0.8"/><rect x="78.2" y="346.1" width="4.8" height="4.8" fill="none" stroke="#e8e8e8" stroke-width="0.8"/><path d="M768 149.2h-3.4l-4.2 6v11.2l4.2 6.2h3.4z" fill="#e6e6e6" stroke="#c4c4c4" stroke-width="0.6"/><path d="M764 160h4M765 164h3" stroke="#cfcfcf" stroke-width="0.5"/><rect x="746.4" y="63" width="22" height="5.4" fill="#2c2c2c"/><path d="M750 65.8h2.4M757 64.4h2.6v2.6h-2.6zM763.6 64.4l2.6 2.6M766.2 64.4l-2.6 2.6" stroke="#6e6e6e" stroke-width="0.45" fill="none"/></svg>
<div class="t" style="left:-19.60px;width:200px;text-align:center;top:303px;font-size:7px;color:#e0e0e0;-webkit-text-stroke:0">Y</div>
<div class="t" style="left:22.80px;width:200px;text-align:center;top:345px;font-size:7px;color:#e0e0e0;-webkit-text-stroke:0">X</div>
<div class="a" style="left:0.00px;top:360.40px;width:768.00px;height:7.80px;background:#fff;"></div>
<div class="a" style="left:0.00px;top:360.40px;width:36.00px;height:7.80px;background:#e8e9ec;"></div>
<svg class="a" style="left:0;top:0" width="768" height="413" viewBox="0 0 768 413"><defs><linearGradient id="sb" x1="0" x2="1"><stop offset="0" stop-color="#c8cbd2"/><stop offset="0.45" stop-color="#bec2cc"/><stop offset="0.6" stop-color="#adb4c2"/><stop offset="0.8" stop-color="#b1b7c4"/><stop offset="0.92" stop-color="#c0c4cc"/><stop offset="1" stop-color="#c8cad0"/></linearGradient></defs><rect x="0.6000000000000001" y="361.4" width="5.4" height="5.8" fill="#f6f6f8" stroke="#8a8e98" stroke-width="0.45"/><path d="M4.6 362.8l-1.8 1.5 1.8 1.5zM2.0 362.8v3" fill="#222" stroke="#222" stroke-width="0.4"/><rect x="7.0" y="361.4" width="5.4" height="5.8" fill="#f6f6f8" stroke="#8a8e98" stroke-width="0.45"/><path d="M10.6 362.8l-1.9 1.5 1.9 1.5z" fill="#222"/><rect x="13.6" y="361.4" width="5.4" height="5.8" fill="#f6f6f8" stroke="#8a8e98" stroke-width="0.45"/><path d="M15.399999999999999 362.8l1.9 1.5-1.9 1.5z" fill="#222"/><rect x="20.4" y="361.4" width="5.4" height="5.8" fill="#f6f6f8" stroke="#8a8e98" stroke-width="0.45"/><path d="M21.8 362.8l1.8 1.5-1.8 1.5zM24.4 362.8v3" fill="#222" stroke="#222" stroke-width="0.4"/><rect x="27.4" y="361.4" width="5.4" height="5.8" fill="#f6f6f8" stroke="#8a8e98" stroke-width="0.45"/><path d="M28.4 364.3h3.4M30.1 362.6v3.4" stroke="#222" stroke-width="0.7"/><path d="M36 360.6h20l2.6 7.4" fill="none" stroke="#666" stroke-width="0.4"/><path d="M120.80000000000001 362.2l3.2 5.6M122.60000000000001 364.6l-2.2 3.2" fill="none" stroke="#333" stroke-width="0.45"/><path d="M214.4 362.2l3.2 5.6M216.2 364.6l-2.2 3.2" fill="none" stroke="#333" stroke-width="0.45"/><path d="M297.0 362.2l3.2 5.6M298.8 364.6l-2.2 3.2" fill="none" stroke="#333" stroke-width="0.45"/><path d="M364.79999999999995 362.2l3.2 5.6M366.59999999999997 364.6l-2.2 3.2" fill="none" stroke="#333" stroke-width="0.45"/><path d="M456.0 362.2l3.2 5.6M457.8 364.6l-2.2 3.2" fill="none" stroke="#333" stroke-width="0.45"/><path d="M549.6 362.2l3.2 5.6M551.4000000000001 364.6l-2.2 3.2" fill="none" stroke="#333" stroke-width="0.45"/><path d="M665.8 362.2l3.2 5.6M667.6 364.6l-2.2 3.2" fill="none" stroke="#333" stroke-width="0.45"/><path d="M735.0 362.2l3.2 5.6M736.8000000000001 364.6l-2.2 3.2" fill="none" stroke="#333" stroke-width="0.45"/><rect x="0" y="368.2" width="768" height="33.8" fill="#fff"/><rect x="0" y="368.2" width="7.2" height="33.8" fill="#e4e5e9"/><path d="M0 368.2h768" stroke="#8a8e98" stroke-width="0.5"/><path d="M2.2 371.8l2.6 2.6M4.8 371.8l-2.6 2.6" stroke="#222" stroke-width="0.6"/><path d="M2.2 381h2.8l-1.4 1.8z" fill="#222"/><path d="M7.2 394.3h756" stroke="#b4b8c0" stroke-width="0.5"/><rect x="763.4" y="368.6" width="4.6" height="25.4" fill="#f0f0f0"/><rect x="764" y="374.6" width="3.6" height="13" fill="#c4c4c4" stroke="#8a8a8a" stroke-width="0.3"/><path d="M764.6 391.4l1.2 1.2 1.2-1.2" fill="none" stroke="#333" stroke-width="0.5"/><rect x="0" y="402" width="768" height="11" fill="#c3c7cf"/><rect x="0" y="402" width="768" height="0.6" fill="#9a9ea8"/><rect x="0" y="402.6" width="768" height="10.4" fill="url(#sb)"/><path d="M427.6 408.6h5.6M430.4 405.8v5.6" stroke="#e02020" stroke-width="0.9"/><rect x="494.6" y="405.0" width="7" height="7.2" fill="#f4f7fc" stroke="#5a86c8" stroke-width="0.5"/><path d="M497 407.0h2.2v3.6" fill="none" stroke="#2a5aa8" stroke-width="0.6"/><path d="M508 408.6h4.6M511 407.20000000000005l1.8 1.4-1.8 1.4" fill="none" stroke="#d84040" stroke-width="0.6"/><path d="M520 410.8l2.5-4.6 2.5 4.6z" fill="#dfe3ea" stroke="#6a7080" stroke-width="0.5"/><rect x="543.6" y="405.0" width="7" height="7.2" fill="#e8f0fa" stroke="#5a86c8" stroke-width="0.5"/><path d="M545 410.6l1.6-3.6 1.6 3.6z" fill="#e8c040"/><circle cx="548.8" cy="407.0" r="1" fill="#3a7ac8"/><path d="M556.4 410.6l1.6-4 1.6 4M560 407.6l1.4 3" fill="none" stroke="#6a7080" stroke-width="0.5"/><path d="M568.6 406.6h4.8M568.6 408.6h3M568.6 410.6h4.8" stroke="#c05050" stroke-width="0.5"/><path d="M581 406.20000000000005h5.6v4.8h-5.6zM581 407.8h5.6M581 409.40000000000003h5.6M582.8 406.20000000000005v4.8M584.8 406.20000000000005v4.8" fill="none" stroke="#5a606c" stroke-width="0.4"/><rect x="591.6" y="405.0" width="7.2" height="7.2" fill="#f2f6fc" stroke="#4a7ac0" stroke-width="0.5"/><rect x="603.6" y="405.0" width="7.2" height="7.2" fill="#f2f6fc" stroke="#4a7ac0" stroke-width="0.5"/><path d="M592.8 406.8h2.6v1.6h-2.6zM595.4 409.0h2.4" stroke="#1f4f9a" stroke-width="0.5" fill="#3a6ab8"/><path d="M604.6 411.0l2-3 1.4 1.6 1.8-2.6" fill="none" stroke="#3a9a4a" stroke-width="0.6"/><rect x="604.4" y="410.20000000000005" width="2" height="1.4" fill="#d84040"/><circle cx="619.8" cy="408.6" r="2.6" fill="#e9d8d8" stroke="#c03030" stroke-width="0.7"/><path d="M619.8 408.6v-1.6M619.8 408.6h1.4" stroke="#802020" stroke-width="0.4"/><rect x="628.2" y="405.40000000000003" width="6.4" height="6.4" fill="#e4ecf8" stroke="#8aa4cc" stroke-width="0.5"/><rect x="640" y="405.0" width="7.2" height="7.2" fill="#f4f6fa" stroke="#4a5a7a" stroke-width="0.5"/><path d="M641.6 410.6l3.6-4.4M642 410.8h4" stroke="#2a3a5a" stroke-width="0.6"/><rect x="652" y="405.0" width="7.2" height="7.2" fill="#f4f6fa" stroke="#4a5a7a" stroke-width="0.5"/><path d="M653.4 406.8h4.6M653.4 408.6h4.6M653.4 410.40000000000003h4.6" stroke="#2a3a5a" stroke-width="0.8"/><circle cx="701.8" cy="408.6" r="2.7" fill="#1f6fd0"/><circle cx="701.8" cy="408.6" r="1" fill="#cfe0f8"/><circle cx="713.6" cy="406.6" r="1.2" fill="#333"/><path d="M712 411.6v-3.4h3.2v3.4z" fill="#333"/><path d="M723 407.6a2 2 0 0 1 3.4-1 2 2 0 0 1 3 2.4h-6.4z" fill="#f4f6fa" stroke="#5a6a8a" stroke-width="0.4"/><path d="M726 409.20000000000005l2.4 2" stroke="#2a5aa8" stroke-width="0.7"/><rect x="735" y="405.6" width="5" height="4" fill="#f4f6fa" stroke="#3a4050" stroke-width="0.5"/><rect x="737" y="407.6" width="5" height="4" fill="#fff" stroke="#3a4050" stroke-width="0.5"/><rect x="746.4" y="405.0" width="7.2" height="7.2" fill="#eef2f8" stroke="#5a6a8a" stroke-width="0.5"/><circle cx="750" cy="408.6" r="2.2" fill="#fff" stroke="#3a4050" stroke-width="0.6"/><circle cx="762.2" cy="408.6" r="2.8" fill="#4fc04f" stroke="#2f8f2f" stroke-width="0.4"/><path d="M760.8 408.6l1 1.2 1.8-2.2" fill="none" stroke="#fff" stroke-width="0.6"/></svg>
<div class="t" style="left:40.00px;top:363px;font-size:4.5px;color:#111;font-weight:bold;letter-spacing:-0.1px">Model</div>
<div class="t" style="left:63.00px;top:363px;font-size:4.5px;color:#333;">WALL FRAME LAYOUT A3</div>
<div class="t" style="left:130.60px;top:363px;font-size:4.5px;color:#333;letter-spacing:-0.13px">WALL FRAME TIE DOWN LAYOUT A3</div>
<div class="t" style="left:224.00px;top:363px;font-size:4.5px;color:#333;letter-spacing:-0.13px">WALL FRAME BRACING LAYOUT</div>
<div class="t" style="left:306.40px;top:363px;font-size:4.5px;color:#333;">ROOF TRUSS LAYOUT A3</div>
<div class="t" style="left:374.60px;top:363px;font-size:4.5px;color:#333;letter-spacing:-0.13px">ROOF RAFTER SADDLE LAYOUT A3</div>
<div class="t" style="left:466.60px;top:363px;font-size:4.5px;color:#333;letter-spacing:-0.13px">ROOF TRUSS TIE DOWN LAYOUT A3</div>
<div class="t" style="left:561.40px;top:363px;font-size:4.5px;color:#333;letter-spacing:-0.13px">ROOF RAFTER_SADDLE TIE DOWN LAYOUT A3</div>
<div class="t" style="left:676.60px;top:363px;font-size:4.5px;color:#333;">FLOOR BEAM LAYOUT A3</div>
<div class="t" style="left:745.00px;top:363px;font-size:4.5px;color:#333;">FLOOR TRUSS LAYOUT A3</div>
<div class="m" style="left:8.60px;top:372px;font-size:6px;color:#1e2436;letter-spacing:-0.384px">Zoom:  [In/Out/All/Center/Dynamic/Extents/Left/Previous/Right/Window/ENtity/Scale]&lt;Scale (nX/nXP)&gt;: a</div>
<div class="m" style="left:8.60px;top:378px;font-size:6px;color:#1e2436;letter-spacing:-0.384px">Command: _EXPLAYERS</div>
<div class="m" style="left:8.60px;top:383px;font-size:6px;color:#1e2436;letter-spacing:-0.384px">Command:</div>
<div class="m" style="left:8.60px;top:389px;font-size:6px;color:#1e2436;letter-spacing:-0.384px">Auto saving open drawings...</div>
<div class="t" style="left:8.60px;top:396px;font-size:4.5px;color:#333;">Command:</div>
<div class="t" style="left:1.60px;top:407px;font-size:4.5px;color:#333;">Ready</div>
<div class="t" style="left:438.60px;top:407px;font-size:4.3px;color:#3b4a78;letter-spacing:-0.1px">5743.3419,14688.4278,0</div>
<div class="t" style="left:528.00px;top:407px;font-size:4.2px;color:#444;">1:100</div>
<div class="t" style="left:662.00px;top:407px;font-size:4.3px;color:#3a4258;font-weight:bold;letter-spacing:-0.1px">MODEL</div>
<div class="t" style="left:680.00px;top:407px;font-size:4.0px;color:#a4abb8;letter-spacing:-0.2px">TABLET</div>
<div class="a" style="left:182.60px;top:50.40px;width:476.00px;height:240.30px;background:#f0f0f0;box-shadow:0 0 2.5px rgba(0,0,0,.55);border:0.4px solid #8a8a8a"></div>
<div class="a" style="left:183.00px;top:50.80px;width:475.20px;height:11.40px;background:#fff;"></div>
<div class="a" style="left:183.00px;top:62.20px;width:475.20px;height:8.40px;background:#fff;"></div>
<div class="a" style="left:183.00px;top:70.30px;width:475.20px;height:12.70px;background:#fff;border-top:0.5px solid #c4c4c4;border-bottom:0.5px solid #cccccc"></div>
<div class="a" style="left:183.00px;top:70.80px;width:257.60px;height:11.70px;background:#eeeeee;border-right:0.4px solid #d0d0d0"></div>
<div class="a" style="left:185.6px;top:53.2px;width:6.4px;height:6.4px;border-radius:50%;background:radial-gradient(circle at 40% 35%,#777,#2b2b2b 60%,#111)"></div>
<div class="t" style="left:194.40px;top:55px;font-size:4.8px;color:#222;">Explorer - Layers</div>
<div class="t" style="left:187.40px;top:66px;font-size:4.7px;color:#222;">Edit</div>
<div class="t" style="left:199.80px;top:66px;font-size:4.7px;color:#222;">View</div>
<svg class="a" style="left:0;top:0" width="768" height="300" viewBox="0 0 768 300"><path d="M646.8 54.4l4 4M650.8 54.4l-4 4" stroke="#555" stroke-width="0.5"/><path d="M610.4 56.5h4.2" stroke="#555" stroke-width="0.5"/><rect x="628.7" y="54.5" width="3.8" height="3.8" fill="none" stroke="#555" stroke-width="0.5"/><path d="M189.6 75.10000000000001h2.6l1.6 1.6v3.8h-4.2z" fill="#fff" stroke="#7a7f88" stroke-width="0.45"/><path d="M189 74.7l1.6 1.2-1.8.6z" fill="#e8c84a"/><path d="M198.4 77.7l1.8 2.2 3.2-4.6" fill="none" stroke="#1a3f8a" stroke-width="1.5"/><path d="M206.6 74.10000000000001v8" stroke="#c9c9c9" stroke-width="0.4"/><path d="M210.6 74.7l3 4.4M213.8 74.7l-3 4.4" stroke="#2a5ea8" stroke-width="1.1"/><circle cx="210.6" cy="79.9" r="0.9" fill="none" stroke="#2a5ea8" stroke-width="0.6"/><circle cx="213.8" cy="79.9" r="0.9" fill="none" stroke="#2a5ea8" stroke-width="0.6"/><rect x="219.4" y="74.9" width="3" height="3.8" fill="#c9d6ea" stroke="#6f86ac" stroke-width="0.5"/><rect x="221" y="76.5" width="3" height="3.8" fill="#dbe4f2" stroke="#6f86ac" stroke-width="0.5"/><rect x="228.8" y="74.9" width="3.4" height="4.4" fill="#e9e9ec" stroke="#9a9aa2" stroke-width="0.4"/><rect x="230.6" y="76.7" width="2.8" height="3.6" fill="#fafafa" stroke="#9a9aa2" stroke-width="0.4"/><path d="M237 74.10000000000001v8" stroke="#c9c9c9" stroke-width="0.4"/><path d="M240.6 75.7l3.8 4M244.4 75.7l-3.8 4" stroke="#d4141c" stroke-width="1.5"/><path d="M249.8 74.9h2.6l1.6 1.6v4h-4.2z" fill="#fff" stroke="#6f757f" stroke-width="0.45"/><circle cx="253.6" cy="79.7" r="1.1" fill="#3fae5a"/><path d="M258 74.10000000000001v8" stroke="#c9c9c9" stroke-width="0.4"/><path d="M260.8 77.9l2.4-2.6 1 1.2 2-2v2.6l-2.4 2.6-1-1.2-2 2z" fill="#d8141c"/><rect x="268.6" y="73.7" width="8" height="8" fill="#cfe0f4" stroke="#8ab0dc" stroke-width="0.3"/><path d="M270.2 77.9l2.4-2.6 1 1.2 2-2v2.6l-2.4 2.6-1-1.2-2 2z" fill="#d8141c"/><path d="M281 74.10000000000001v8" stroke="#c9c9c9" stroke-width="0.4"/><path d="M286.4 76.10000000000001l2.6-1.2 2.6 1.2-2.6 1.2z" fill="#f2d878" stroke="#5a5f6a" stroke-width="0.5"/><path d="M286.4 77.7l2.6 1.2 2.6-1.2M286.4 79.10000000000001l2.6 1.2 2.6-1.2" fill="none" stroke="#6a6f7a" stroke-width="0.4"/><path d="M289.59999999999997 77.7l1 2.8.5-1 1.1.1z" fill="#223"/><path d="M294.8 76.10000000000001l2.6-1.2 2.6 1.2-2.6 1.2z" fill="#f2d878" stroke="#5a5f6a" stroke-width="0.5"/><path d="M294.8 77.7l2.6 1.2 2.6-1.2M294.8 79.10000000000001l2.6 1.2 2.6-1.2" fill="none" stroke="#6a6f7a" stroke-width="0.4"/><path d="M298.0 77.7l1 2.8.5-1 1.1.1z" fill="#223"/><rect x="305" y="73.7" width="8" height="8" fill="#cfe0f4" stroke="#8ab0dc" stroke-width="0.3"/><rect x="306.4" y="75.10000000000001" width="5.2" height="5.2" fill="#f4f6fa" stroke="#3a5f9a" stroke-width="0.5"/><rect x="306.4" y="75.10000000000001" width="5.2" height="1.4" fill="#3a5f9a"/><rect x="318" y="75.10000000000001" width="5.2" height="5.2" fill="#f0f1f4" stroke="#8a8f9a" stroke-width="0.5"/><path d="M318 76.7h5.2M319.6 76.7v3.6" stroke="#8a8f9a" stroke-width="0.4"/><path d="M327 74.10000000000001v8" stroke="#c9c9c9" stroke-width="0.4"/><path d="M330.8 74.9h3.8l-1.4 1.8v2.2l-1 .6v-2.8z" fill="#7a2a9a"/><path d="M333.8 78.10000000000001l1.6 2" stroke="#334" stroke-width="0.7"/><path d="M339.6 75.5h3.8l-1.4 1.9v2.4l-1 .6v-3z" fill="#3f9a3a"/><rect x="345.6" y="74.10000000000001" width="61" height="7.2" fill="#fff" stroke="#8f8f8f" stroke-width="0.45"/><rect x="413.6" y="74.9" width="5.4" height="5.6" fill="#f3f4f6" stroke="#8a909b" stroke-width="0.45"/><path d="M413.6 76.5h5.4" stroke="#8a909b" stroke-width="0.4"/><circle cx="433.4" cy="77.7" r="3" fill="#1f5fae"/></svg>
<div class="t" style="left:333.40px;width:200px;text-align:center;top:76px;font-size:4.6px;color:#fff;font-weight:bold">?</div>
<div class="a" style="left:185.60px;top:83.70px;width:96.00px;height:6.90px;background:#e9e9e9;border:0.4px solid #c4c4c4"></div>
<div class="t" style="left:187.00px;top:86px;font-size:4.5px;color:#222;letter-spacing:-0.12px">Layers settings in drawing - [NX_Layout_S1.dwg]</div>
<div class="a" style="left:185.80px;top:90.60px;width:120.60px;height:190.00px;background:#fff;border:0.45px solid #a0a5ad"></div>
<svg class="a" style="left:0;top:0" width="768" height="300" viewBox="0 0 768 300"><rect x="190.4" y="95.6" width="3" height="3" fill="#fff" stroke="#9a9a9a" stroke-width="0.4"/><path d="M191.1 97.1h1.6" stroke="#555" stroke-width="0.4"/><rect x="197.2" y="95.6" width="3.6" height="3.4" fill="#eef0f4" stroke="#7a808c" stroke-width="0.45"/><rect x="198.6" y="94.6" width="3.4" height="3" fill="#f6f7f9" stroke="#7a808c" stroke-width="0.45"/><path d="M199.4 100v147.4" stroke="#b5b5b5" stroke-width="0.4" stroke-dasharray="0.6 0.6"/><path d="M199.4 106.10h5" stroke="#b5b5b5" stroke-width="0.4" stroke-dasharray="0.6 0.6"/><rect x="204.8" y="102.90" width="4.6" height="4.4" fill="#f2f2f2" stroke="#8e9198" stroke-width="0.55"/><path d="M204.8 103.90h4.6" stroke="#8e9198" stroke-width="0.5"/><path d="M206.4 105.20h4.6l-1.8 2.1v1.3l-1 .6v-1.9z" fill="#1c1c1c"/><path d="M199.4 114.93h5" stroke="#b5b5b5" stroke-width="0.4" stroke-dasharray="0.6 0.6"/><rect x="204.8" y="111.73" width="4.6" height="4.4" fill="#f2f2f2" stroke="#8e9198" stroke-width="0.55"/><path d="M204.8 112.73h4.6" stroke="#8e9198" stroke-width="0.5"/><path d="M206.4 114.03h4.6l-1.8 2.1v1.3l-1 .6v-1.9z" fill="#1c1c1c"/><path d="M199.4 123.76h5" stroke="#b5b5b5" stroke-width="0.4" stroke-dasharray="0.6 0.6"/><rect x="204.8" y="120.56" width="4.6" height="4.4" fill="#f2f2f2" stroke="#8e9198" stroke-width="0.55"/><path d="M204.8 121.56h4.6" stroke="#8e9198" stroke-width="0.5"/><path d="M206.4 122.86h4.6l-1.8 2.1v1.3l-1 .6v-1.9z" fill="#1c1c1c"/><path d="M199.4 132.59h5" stroke="#b5b5b5" stroke-width="0.4" stroke-dasharray="0.6 0.6"/><rect x="204.8" y="129.39" width="4.6" height="4.4" fill="#f2f2f2" stroke="#8e9198" stroke-width="0.55"/><path d="M204.8 130.39h4.6" stroke="#8e9198" stroke-width="0.5"/><path d="M206.4 131.69h4.6l-1.8 2.1v1.3l-1 .6v-1.9z" fill="#1c1c1c"/><path d="M199.4 141.42h5" stroke="#b5b5b5" stroke-width="0.4" stroke-dasharray="0.6 0.6"/><rect x="204.8" y="138.22" width="4.6" height="4.4" fill="#f2f2f2" stroke="#8e9198" stroke-width="0.55"/><path d="M204.8 139.22h4.6" stroke="#8e9198" stroke-width="0.5"/><path d="M206.4 140.52h4.6l-1.8 2.1v1.3l-1 .6v-1.9z" fill="#1c1c1c"/><path d="M199.4 150.25h5" stroke="#b5b5b5" stroke-width="0.4" stroke-dasharray="0.6 0.6"/><rect x="204.8" y="147.05" width="4.6" height="4.4" fill="#f2f2f2" stroke="#8e9198" stroke-width="0.55"/><path d="M204.8 148.05h4.6" stroke="#8e9198" stroke-width="0.5"/><path d="M206.4 149.35h4.6l-1.8 2.1v1.3l-1 .6v-1.9z" fill="#1c1c1c"/><path d="M199.4 159.08h5" stroke="#b5b5b5" stroke-width="0.4" stroke-dasharray="0.6 0.6"/><rect x="204.8" y="155.88" width="4.6" height="4.4" fill="#f2f2f2" stroke="#8e9198" stroke-width="0.55"/><path d="M204.8 156.88h4.6" stroke="#8e9198" stroke-width="0.5"/><path d="M206.4 158.18h4.6l-1.8 2.1v1.3l-1 .6v-1.9z" fill="#1c1c1c"/><path d="M199.4 167.91h5" stroke="#b5b5b5" stroke-width="0.4" stroke-dasharray="0.6 0.6"/><rect x="204.8" y="164.71" width="4.6" height="4.4" fill="#f2f2f2" stroke="#8e9198" stroke-width="0.55"/><path d="M204.8 165.71h4.6" stroke="#8e9198" stroke-width="0.5"/><path d="M206.4 167.01h4.6l-1.8 2.1v1.3l-1 .6v-1.9z" fill="#1c1c1c"/><path d="M199.4 176.74h5" stroke="#b5b5b5" stroke-width="0.4" stroke-dasharray="0.6 0.6"/><rect x="204.8" y="173.54" width="4.6" height="4.4" fill="#f2f2f2" stroke="#8e9198" stroke-width="0.55"/><path d="M204.8 174.54h4.6" stroke="#8e9198" stroke-width="0.5"/><path d="M206.4 175.84h4.6l-1.8 2.1v1.3l-1 .6v-1.9z" fill="#1c1c1c"/><path d="M199.4 185.57h5" stroke="#b5b5b5" stroke-width="0.4" stroke-dasharray="0.6 0.6"/><rect x="204.8" y="182.37" width="4.6" height="4.4" fill="#f2f2f2" stroke="#8e9198" stroke-width="0.55"/><path d="M204.8 183.37h4.6" stroke="#8e9198" stroke-width="0.5"/><path d="M206.4 184.67h4.6l-1.8 2.1v1.3l-1 .6v-1.9z" fill="#1c1c1c"/><path d="M199.4 194.40h5" stroke="#b5b5b5" stroke-width="0.4" stroke-dasharray="0.6 0.6"/><rect x="204.8" y="191.20" width="4.6" height="4.4" fill="#f2f2f2" stroke="#8e9198" stroke-width="0.55"/><path d="M204.8 192.20h4.6" stroke="#8e9198" stroke-width="0.5"/><path d="M206.4 193.50h4.6l-1.8 2.1v1.3l-1 .6v-1.9z" fill="#1c1c1c"/><path d="M199.4 203.23h5" stroke="#b5b5b5" stroke-width="0.4" stroke-dasharray="0.6 0.6"/><rect x="204.8" y="200.03" width="4.6" height="4.4" fill="#f2f2f2" stroke="#8e9198" stroke-width="0.55"/><path d="M204.8 201.03h4.6" stroke="#8e9198" stroke-width="0.5"/><path d="M206.4 202.33h4.6l-1.8 2.1v1.3l-1 .6v-1.9z" fill="#1c1c1c"/><path d="M199.4 212.06h5" stroke="#b5b5b5" stroke-width="0.4" stroke-dasharray="0.6 0.6"/><rect x="204.8" y="208.86" width="4.6" height="4.4" fill="#f2f2f2" stroke="#8e9198" stroke-width="0.55"/><path d="M204.8 209.86h4.6" stroke="#8e9198" stroke-width="0.5"/><path d="M206.4 211.16h4.6l-1.8 2.1v1.3l-1 .6v-1.9z" fill="#1c1c1c"/><path d="M199.4 220.89h5" stroke="#b5b5b5" stroke-width="0.4" stroke-dasharray="0.6 0.6"/><rect x="204.8" y="217.69" width="4.6" height="4.4" fill="#dfeaf6" stroke="#4a7ab4" stroke-width="0.55"/><path d="M204.8 218.69h4.6" stroke="#4a7ab4" stroke-width="0.5"/><path d="M206.4 219.99h4.6l-1.8 2.1v1.3l-1 .6v-1.9z" fill="#1f4f8a"/><rect x="197.9" y="219.39" width="3" height="3" fill="#fff" stroke="#9a9a9a" stroke-width="0.4"/><path d="M198.6 220.89h1.6M199.4 220.09v1.6" stroke="#555" stroke-width="0.4"/><path d="M199.4 229.72h5" stroke="#b5b5b5" stroke-width="0.4" stroke-dasharray="0.6 0.6"/><rect x="204.8" y="226.52" width="4.6" height="4.4" fill="#dfeaf6" stroke="#4a7ab4" stroke-width="0.55"/><path d="M204.8 227.52h4.6" stroke="#4a7ab4" stroke-width="0.5"/><path d="M206.4 228.82h4.6l-1.8 2.1v1.3l-1 .6v-1.9z" fill="#1f4f8a"/><rect x="197.9" y="228.22" width="3" height="3" fill="#fff" stroke="#9a9a9a" stroke-width="0.4"/><path d="M198.6 229.72h1.6M199.4 228.92v1.6" stroke="#555" stroke-width="0.4"/><path d="M199.4 238.55h5" stroke="#b5b5b5" stroke-width="0.4" stroke-dasharray="0.6 0.6"/><rect x="204.8" y="235.35" width="4.6" height="4.4" fill="#f2f2f2" stroke="#8e9198" stroke-width="0.55"/><path d="M204.8 236.35h4.6" stroke="#8e9198" stroke-width="0.5"/><path d="M206.4 237.65h4.6l-1.8 2.1v1.3l-1 .6v-1.9z" fill="#1c1c1c"/><path d="M199.4 247.38h5" stroke="#b5b5b5" stroke-width="0.4" stroke-dasharray="0.6 0.6"/><rect x="204.8" y="244.18" width="4.6" height="4.4" fill="#f2f2f2" stroke="#8e9198" stroke-width="0.55"/><path d="M204.8 245.18h4.6" stroke="#8e9198" stroke-width="0.5"/><path d="M206.4 246.48h4.6l-1.8 2.1v1.3l-1 .6v-1.9z" fill="#1c1c1c"/><rect x="186.2" y="274.4" width="119.8" height="5.8" fill="#f0f0f0"/><rect x="193" y="275.2" width="104" height="4.2" fill="#cdcdcd"/><path d="M189.8 276l-1.4 1.3 1.4 1.3M302.4 276l1.4 1.3-1.4 1.3" fill="none" stroke="#555" stroke-width="0.6"/></svg>
<div class="a" style="left:186.2px;top:91px;width:119.8px;height:183.4px;overflow:hidden">
<div class="t" style="left:19.40px;top:5px;font-size:4.5px;color:#222;">All</div>
<div class="t" style="left:26.80px;top:14px;font-size:4.5px;color:#2a2a2a;">3-WALL FRAME BRACING LAYOUT</div>
<div class="t" style="left:26.80px;top:23px;font-size:4.5px;color:#2a2a2a;">3-WALL FRAME LAYOUT</div>
<div class="t" style="left:26.80px;top:31px;font-size:4.5px;color:#2a2a2a;">3-WALL FRAME TIE DOWN LAYOUT</div>
<div class="t" style="left:26.80px;top:40px;font-size:4.5px;color:#2a2a2a;">4-FLOOR BEAM LAYOUT</div>
<div class="t" style="left:26.80px;top:49px;font-size:4.5px;color:#2a2a2a;">4-FLOOR LOAD AREA LAYOUT</div>
<div class="t" style="left:26.80px;top:58px;font-size:4.5px;color:#2a2a2a;">4-FLOOR TRUSS LAYOUT</div>
<div class="t" style="left:26.80px;top:67px;font-size:4.5px;color:#2a2a2a;">5-ROOF RAFTER SADDLE LAYOUT</div>
<div class="t" style="left:26.80px;top:75px;font-size:4.5px;color:#2a2a2a;">5-ROOF RAFTER SADDLE TIE DOWN LAYOUT</div>
<div class="t" style="left:26.80px;top:84px;font-size:4.5px;color:#2a2a2a;">5-ROOF TRUSS LAYOUT</div>
<div class="t" style="left:26.80px;top:93px;font-size:4.5px;color:#2a2a2a;">5-ROOF TRUSS TIE DOWN LAYOUT</div>
<div class="t" style="left:26.80px;top:102px;font-size:4.5px;color:#2a2a2a;">6-HIGHLIGHT TIE DOWNS</div>
<div class="t" style="left:26.80px;top:111px;font-size:4.5px;color:#2a2a2a;">7-INSTALLATION DETAILS</div>
<div class="t" style="left:26.80px;top:120px;font-size:4.5px;color:#2a2a2a;">All Used Layers</div>
<div class="t" style="left:26.80px;top:128px;font-size:4.5px;color:#2a2a2a;">LEVEL 1</div>
<div class="t" style="left:26.80px;top:137px;font-size:4.5px;color:#2a2a2a;">LEVEL 2</div>
<div class="t" style="left:26.80px;top:146px;font-size:4.5px;color:#2a2a2a;">PARTS</div>
<div class="t" style="left:26.80px;top:155px;font-size:4.5px;color:#2a2a2a;">Red</div>
</div>
<div class="a" style="left:309.40px;top:90.60px;width:347.40px;height:190.00px;background:#fff;border:0.45px solid #a0a5ad"></div>
<div class="t" style="left:314.80px;top:96px;font-size:4.7px;color:#3a3230;">Layer Name</div>
<div class="t" style="left:360.60px;top:96px;font-size:4.7px;color:#3a3230;">Color</div>
<div class="t" style="left:387.80px;top:96px;font-size:4.7px;color:#3a3230;">Linetype</div>
<div class="t" style="left:422.80px;top:96px;font-size:4.7px;color:#3a3230;">On/Off</div>
<div class="t" style="left:448.20px;top:96px;font-size:4.7px;color:#3a3230;">Lock/Unlock</div>
<div class="t" style="left:492.00px;top:96px;font-size:4.7px;color:#3a3230;">Freeze/Thaw</div>
<div class="t" style="left:531.80px;top:96px;font-size:4.7px;color:#3a3230;">Lineweight</div>
<div class="t" style="left:564.00px;top:96px;font-size:4.7px;color:#3a3230;">Transp...</div>
<div class="t" style="left:587.80px;top:96px;font-size:4.7px;color:#3a3230;">Material</div>
<div class="t" style="left:611.40px;top:96px;font-size:4.7px;color:#3a3230;">Print Style</div>
<div class="t" style="left:645.60px;top:96px;font-size:4.7px;color:#3a3230;">Pr</div>
<div class="a" style="left:358.00px;top:91.80px;width:0.40px;height:182.40px;background:#f1f1f1;"></div>
<div class="a" style="left:386.20px;top:91.80px;width:0.40px;height:182.40px;background:#f1f1f1;"></div>
<div class="a" style="left:419.60px;top:91.80px;width:0.40px;height:182.40px;background:#f1f1f1;"></div>
<div class="a" style="left:442.60px;top:91.80px;width:0.40px;height:182.40px;background:#f1f1f1;"></div>
<div class="a" style="left:482.60px;top:91.80px;width:0.40px;height:182.40px;background:#f1f1f1;"></div>
<div class="a" style="left:529.00px;top:91.80px;width:0.40px;height:182.40px;background:#f1f1f1;"></div>
<div class="a" style="left:561.60px;top:91.80px;width:0.40px;height:182.40px;background:#f1f1f1;"></div>
<div class="a" style="left:584.00px;top:91.80px;width:0.40px;height:182.40px;background:#f1f1f1;"></div>
<div class="a" style="left:608.00px;top:91.80px;width:0.40px;height:182.40px;background:#f1f1f1;"></div>
<div class="a" style="left:642.40px;top:91.80px;width:0.40px;height:182.40px;background:#f1f1f1;"></div>
<div class="a" style="left:311px;top:91px;width:340.4px;height:183.4px;overflow:hidden">
<div class="a" style="left:10.00px;top:11.40px;width:330.00px;height:7.90px;background:#0a74d4;"></div>
<div class="t" style="left:11.30px;top:14px;font-size:4.5px;color:#fff;">0</div>
<div class="t" style="left:59.20px;top:14px;font-size:4.8px;color:#fff;">255,...</div>
<div class="t" style="left:77.40px;top:14px;font-size:4.8px;color:#fff;">Continuous</div>
<div class="t" style="left:230.60px;top:14px;font-size:4.6px;color:#cfe2f6;">0.05 m...</div>
<div class="t" style="left:253.60px;top:14px;font-size:4.6px;color:#cfe2f6;">0</div>
<div class="t" style="left:276.80px;top:14px;font-size:4.8px;color:#cfe2f6;">Global</div>
<div class="t" style="left:11.30px;top:23px;font-size:4.5px;color:#222;">T-TITLE BLOCK</div>
<div class="t" style="left:59.20px;top:23px;font-size:4.8px;color:#222;">green</div>
<div class="t" style="left:77.40px;top:23px;font-size:4.8px;color:#222;">Continuous</div>
<div class="t" style="left:230.60px;top:23px;font-size:4.6px;color:#222;font-weight:bold">0.35 m...</div>
<div class="t" style="left:253.60px;top:23px;font-size:4.6px;color:#222;">0</div>
<div class="t" style="left:276.80px;top:23px;font-size:4.8px;color:#222;">Global</div>
<div class="t" style="left:301.40px;top:23px;font-size:4.7px;color:#9a9a9a;font-style:italic">Color_3</div>
<div class="t" style="left:11.30px;top:31px;font-size:4.5px;color:#222;">T-ECAD-INPUT</div>
<div class="t" style="left:59.20px;top:32px;font-size:4.8px;color:#222;">253</div>
<div class="t" style="left:77.40px;top:32px;font-size:4.8px;color:#222;">Continuous</div>
<div class="t" style="left:230.60px;top:32px;font-size:4.6px;color:#222;font-weight:bold">Default</div>
<div class="t" style="left:253.60px;top:32px;font-size:4.6px;color:#222;">0</div>
<div class="t" style="left:276.80px;top:32px;font-size:4.8px;color:#222;">Global</div>
<div class="t" style="left:301.40px;top:32px;font-size:4.7px;color:#9a9a9a;font-style:italic">Color_253</div>
<div class="t" style="left:11.30px;top:40px;font-size:4.5px;color:#222;">T-VIEWPORT</div>
<div class="t" style="left:59.20px;top:40px;font-size:4.8px;color:#222;">mag...</div>
<div class="t" style="left:77.40px;top:40px;font-size:4.8px;color:#222;">Continuous</div>
<div class="t" style="left:230.60px;top:40px;font-size:4.6px;color:#222;font-weight:bold">0.05 m...</div>
<div class="t" style="left:253.60px;top:40px;font-size:4.6px;color:#222;">0</div>
<div class="t" style="left:276.80px;top:40px;font-size:4.8px;color:#222;">Global</div>
<div class="t" style="left:301.40px;top:40px;font-size:4.7px;color:#9a9a9a;font-style:italic">Color_6</div>
<div class="t" style="left:11.30px;top:49px;font-size:4.5px;color:#222;">Defpoints</div>
<div class="t" style="left:59.20px;top:49px;font-size:4.8px;color:#222;">white</div>
<div class="t" style="left:77.40px;top:49px;font-size:4.8px;color:#222;">Continuous</div>
<div class="t" style="left:230.60px;top:49px;font-size:4.6px;color:#222;font-weight:bold">Default</div>
<div class="t" style="left:253.60px;top:49px;font-size:4.6px;color:#222;">0</div>
<div class="t" style="left:276.80px;top:49px;font-size:4.8px;color:#222;">Global</div>
<div class="t" style="left:301.40px;top:49px;font-size:4.7px;color:#9a9a9a;font-style:italic">Color_7</div>
<div class="t" style="left:11.30px;top:58px;font-size:4.5px;color:#222;">T-DIMENSIONS</div>
<div class="t" style="left:59.20px;top:58px;font-size:4.8px;color:#222;">254</div>
<div class="t" style="left:77.40px;top:58px;font-size:4.8px;color:#222;">Continuous</div>
<div class="t" style="left:230.60px;top:58px;font-size:4.6px;color:#222;font-weight:bold">0.18 m...</div>
<div class="t" style="left:253.60px;top:58px;font-size:4.6px;color:#222;">0</div>
<div class="t" style="left:276.80px;top:58px;font-size:4.8px;color:#222;">Global</div>
<div class="t" style="left:301.40px;top:58px;font-size:4.7px;color:#9a9a9a;font-style:italic">Color_254</div>
<div class="t" style="left:11.30px;top:67px;font-size:4.5px;color:#222;">T-TEXT</div>
<div class="t" style="left:59.20px;top:67px;font-size:4.8px;color:#222;">white</div>
<div class="t" style="left:77.40px;top:67px;font-size:4.8px;color:#222;">Continuous</div>
<div class="t" style="left:230.60px;top:67px;font-size:4.6px;color:#222;font-weight:bold">Default</div>
<div class="t" style="left:253.60px;top:67px;font-size:4.6px;color:#222;">0</div>
<div class="t" style="left:276.80px;top:67px;font-size:4.8px;color:#222;">Global</div>
<div class="t" style="left:301.40px;top:67px;font-size:4.7px;color:#9a9a9a;font-style:italic">Color_7</div>
<div class="t" style="left:11.30px;top:76px;font-size:4.5px;color:#222;">T-DESIGNER I...</div>
<div class="t" style="left:59.20px;top:76px;font-size:4.8px;color:#222;">253</div>
<div class="t" style="left:77.40px;top:76px;font-size:4.8px;color:#222;">Continuous</div>
<div class="t" style="left:230.60px;top:76px;font-size:4.6px;color:#222;font-weight:bold">Default</div>
<div class="t" style="left:253.60px;top:76px;font-size:4.6px;color:#222;">0</div>
<div class="t" style="left:276.80px;top:76px;font-size:4.8px;color:#222;">Global</div>
<div class="t" style="left:301.40px;top:76px;font-size:4.7px;color:#9a9a9a;font-style:italic">Color_253</div>
<div class="t" style="left:11.30px;top:84px;font-size:4.5px;color:#222;">1-REF-GRID</div>
<div class="t" style="left:59.20px;top:85px;font-size:4.8px;color:#222;">253</div>
<div class="t" style="left:77.40px;top:85px;font-size:4.8px;color:#222;">Continuous</div>
<div class="t" style="left:230.60px;top:85px;font-size:4.6px;color:#222;font-weight:bold">Default</div>
<div class="t" style="left:253.60px;top:85px;font-size:4.6px;color:#222;">0</div>
<div class="t" style="left:276.80px;top:85px;font-size:4.8px;color:#222;">Global</div>
<div class="t" style="left:301.40px;top:85px;font-size:4.7px;color:#9a9a9a;font-style:italic">Color_253</div>
<div class="t" style="left:11.30px;top:93px;font-size:4.5px;color:#222;">1-REF-PITCH ...</div>
<div class="t" style="left:59.20px;top:93px;font-size:4.8px;color:#222;">white</div>
<div class="t" style="left:77.40px;top:93px;font-size:4.8px;color:#222;">Continuous</div>
<div class="t" style="left:230.60px;top:93px;font-size:4.6px;color:#222;font-weight:bold">Default</div>
<div class="t" style="left:253.60px;top:93px;font-size:4.6px;color:#222;">0</div>
<div class="t" style="left:276.80px;top:93px;font-size:4.8px;color:#222;">Global</div>
<div class="t" style="left:301.40px;top:93px;font-size:4.7px;color:#9a9a9a;font-style:italic">Color_7</div>
<div class="t" style="left:11.30px;top:102px;font-size:4.5px;color:#222;">1-REF-EXT PE...</div>
<div class="t" style="left:59.20px;top:102px;font-size:4.8px;color:#222;">white</div>
<div class="t" style="left:77.40px;top:102px;font-size:4.8px;color:#222;">Continuous</div>
<div class="t" style="left:230.60px;top:102px;font-size:4.6px;color:#222;font-weight:bold">Default</div>
<div class="t" style="left:253.60px;top:102px;font-size:4.6px;color:#222;">0</div>
<div class="t" style="left:276.80px;top:102px;font-size:4.8px;color:#222;">Global</div>
<div class="t" style="left:301.40px;top:102px;font-size:4.7px;color:#9a9a9a;font-style:italic">Color_7</div>
<div class="t" style="left:11.30px;top:111px;font-size:4.5px;color:#222;">2-EXREF-AAA</div>
<div class="t" style="left:59.20px;top:111px;font-size:4.8px;color:#222;">white</div>
<div class="t" style="left:77.40px;top:111px;font-size:4.8px;color:#222;">Continuous</div>
<div class="t" style="left:230.60px;top:111px;font-size:4.6px;color:#222;font-weight:bold">Default</div>
<div class="t" style="left:253.60px;top:111px;font-size:4.6px;color:#222;">0</div>
<div class="t" style="left:276.80px;top:111px;font-size:4.8px;color:#222;">Global</div>
<div class="t" style="left:301.40px;top:111px;font-size:4.7px;color:#9a9a9a;font-style:italic">Color_7</div>
<div class="t" style="left:11.30px;top:120px;font-size:4.5px;color:#222;">2-EXREF-BBB</div>
<div class="t" style="left:59.20px;top:120px;font-size:4.8px;color:#222;">white</div>
<div class="t" style="left:77.40px;top:120px;font-size:4.8px;color:#222;">Continuous</div>
<div class="t" style="left:230.60px;top:120px;font-size:4.6px;color:#222;font-weight:bold">Default</div>
<div class="t" style="left:253.60px;top:120px;font-size:4.6px;color:#222;">0</div>
<div class="t" style="left:276.80px;top:120px;font-size:4.8px;color:#222;">Global</div>
<div class="t" style="left:301.40px;top:120px;font-size:4.7px;color:#9a9a9a;font-style:italic">Color_7</div>
<div class="t" style="left:11.30px;top:129px;font-size:4.5px;color:#222;">3-WALLS-NO...</div>
<div class="t" style="left:59.20px;top:129px;font-size:4.8px;color:#222;">blue</div>
<div class="t" style="left:77.40px;top:129px;font-size:4.8px;color:#222;">Continuous</div>
<div class="t" style="left:230.60px;top:129px;font-size:4.6px;color:#222;font-weight:bold">0.13 m...</div>
<div class="t" style="left:253.60px;top:129px;font-size:4.6px;color:#222;">0</div>
<div class="t" style="left:276.80px;top:129px;font-size:4.8px;color:#222;">Global</div>
<div class="t" style="left:301.40px;top:129px;font-size:4.7px;color:#9a9a9a;font-style:italic">Color_5</div>
<div class="t" style="left:11.30px;top:137px;font-size:4.5px;color:#222;">3-WALLS-OT...</div>
<div class="t" style="left:59.20px;top:138px;font-size:4.8px;color:#222;">white</div>
<div class="t" style="left:77.40px;top:138px;font-size:4.8px;color:#222;">Continuous</div>
<div class="t" style="left:230.60px;top:137px;font-size:4.6px;color:#222;font-weight:bold">Default</div>
<div class="t" style="left:253.60px;top:137px;font-size:4.6px;color:#222;">0</div>
<div class="t" style="left:276.80px;top:138px;font-size:4.8px;color:#222;">Global</div>
<div class="t" style="left:301.40px;top:138px;font-size:4.7px;color:#9a9a9a;font-style:italic">Color_7</div>
<div class="t" style="left:11.30px;top:146px;font-size:4.5px;color:#222;">3-WALLS-OT...</div>
<div class="t" style="left:59.20px;top:146px;font-size:4.8px;color:#222;">white</div>
<div class="t" style="left:77.40px;top:146px;font-size:4.8px;color:#222;">Continuous</div>
<div class="t" style="left:230.60px;top:146px;font-size:4.6px;color:#222;font-weight:bold">Default</div>
<div class="t" style="left:253.60px;top:146px;font-size:4.6px;color:#222;">0</div>
<div class="t" style="left:276.80px;top:146px;font-size:4.8px;color:#222;">Global</div>
<div class="t" style="left:301.40px;top:146px;font-size:4.7px;color:#9a9a9a;font-style:italic">Color_7</div>
<div class="t" style="left:11.30px;top:155px;font-size:4.5px;color:#222;">3-WALLS-BEA...</div>
<div class="t" style="left:59.20px;top:155px;font-size:4.8px;color:#222;">white</div>
<div class="t" style="left:77.40px;top:155px;font-size:4.8px;color:#222;">Continuous</div>
<div class="t" style="left:230.60px;top:155px;font-size:4.6px;color:#222;font-weight:bold">Default</div>
<div class="t" style="left:253.60px;top:155px;font-size:4.6px;color:#222;">0</div>
<div class="t" style="left:276.80px;top:155px;font-size:4.8px;color:#222;">Global</div>
<div class="t" style="left:301.40px;top:155px;font-size:4.7px;color:#9a9a9a;font-style:italic">Color_7</div>
<div class="t" style="left:11.30px;top:164px;font-size:4.5px;color:#222;">3-WALLS-BEA...</div>
<div class="t" style="left:59.20px;top:164px;font-size:4.8px;color:#222;">white</div>
<div class="t" style="left:77.40px;top:164px;font-size:4.8px;color:#222;">Continuous</div>
<div class="t" style="left:230.60px;top:164px;font-size:4.6px;color:#222;font-weight:bold">Default</div>
<div class="t" style="left:253.60px;top:164px;font-size:4.6px;color:#222;">0</div>
<div class="t" style="left:276.80px;top:164px;font-size:4.8px;color:#222;">Global</div>
<div class="t" style="left:301.40px;top:164px;font-size:4.7px;color:#9a9a9a;font-style:italic">Color_7</div>
<div class="t" style="left:11.30px;top:173px;font-size:4.5px;color:#222;">3-WALLS-BEA...</div>
<div class="t" style="left:59.20px;top:173px;font-size:4.8px;color:#222;">white</div>
<div class="t" style="left:77.40px;top:173px;font-size:4.8px;color:#222;">Continuous</div>
<div class="t" style="left:230.60px;top:173px;font-size:4.6px;color:#222;font-weight:bold">Default</div>
<div class="t" style="left:253.60px;top:173px;font-size:4.6px;color:#222;">0</div>
<div class="t" style="left:276.80px;top:173px;font-size:4.8px;color:#222;">Global</div>
<div class="t" style="left:301.40px;top:173px;font-size:4.7px;color:#9a9a9a;font-style:italic">Color_7</div>
<div class="t" style="left:11.30px;top:182px;font-size:4.5px;color:#222;">3-WALLS-WB...</div>
<div class="t" style="left:59.20px;top:182px;font-size:4.8px;color:#222;">white</div>
<div class="t" style="left:77.40px;top:182px;font-size:4.8px;color:#222;">Continuous</div>
<div class="t" style="left:230.60px;top:182px;font-size:4.6px;color:#222;font-weight:bold">Default</div>
<div class="t" style="left:253.60px;top:182px;font-size:4.6px;color:#222;">0</div>
<div class="t" style="left:276.80px;top:182px;font-size:4.8px;color:#222;">Global</div>
<div class="t" style="left:301.40px;top:182px;font-size:4.7px;color:#9a9a9a;font-style:italic">Color_7</div>
<svg class="a" style="left:0;top:0" width="341" height="184" viewBox="0 0 341 184"><rect x="49.80000000000001" y="12.25" width="6.8" height="6.2" fill="#e2108a" stroke="#3c3c3c" stroke-width="0.75"/><circle cx="119.19999999999999" cy="14.35" r="1.9" fill="#f4f6d8" stroke="#cfe0c0" stroke-width="0.4"/><rect x="118.39999999999999" y="16.25" width="1.6" height="1.8" fill="#dfe8f0"/><rect x="148.79999999999998" y="14.05" width="3.2" height="3" fill="#fff"/><circle cx="194.3" cy="15.35" r="2.2" fill="#b4cc58" stroke="#8fb050" stroke-width="0.5"/><circle cx="194.3" cy="15.35" r="0.9" fill="#f4f8c8"/><rect x="221" y="14.50" width="6.2" height="1" fill="#fff"/><rect x="220.39999999999998" y="12.35" width="7.4" height="6" fill="none" stroke="#fff" stroke-width="0.5"/><path d="M339.4 13.75a1.8 1.8 0 0 0 0 3.6z" fill="#cfe0f4"/><rect x="49.80000000000001" y="21.08" width="6.8" height="6.2" fill="#20ee20" stroke="#3c3c3c" stroke-width="0.75"/><circle cx="119.19999999999999" cy="23.18" r="1.9" fill="#f3f08c" stroke="#b9b560" stroke-width="0.4"/><rect x="118.39999999999999" y="25.08" width="1.6" height="1.8" fill="#77776a"/><rect x="148.39999999999998" y="23.78" width="3.2" height="2.8" fill="#f6eec8" stroke="#c4a458" stroke-width="0.5"/><path d="M150.79999999999998 23.78v-1a1.3 1.3 0 0 1 2.6 0v1" fill="none" stroke="#3a4054" stroke-width="0.75"/><circle cx="194.3" cy="24.18" r="2.2" fill="#bcd426" stroke="#8a9c18" stroke-width="0.5"/><circle cx="194.3" cy="24.18" r="0.9" fill="#f4f8c8"/><rect x="221" y="23.00" width="6.2" height="1.6" fill="#2a2a2a"/><path d="M339.4 22.58a1.8 1.8 0 0 0 0 3.6z" fill="#555"/><rect x="49.80000000000001" y="29.91" width="6.8" height="6.2" fill="#adadad" stroke="#3c3c3c" stroke-width="0.75"/><circle cx="119.19999999999999" cy="32.01" r="1.9" fill="#f3f08c" stroke="#b9b560" stroke-width="0.4"/><rect x="118.39999999999999" y="33.91" width="1.6" height="1.8" fill="#77776a"/><rect x="148.39999999999998" y="32.61" width="3.2" height="2.8" fill="#f6eec8" stroke="#c4a458" stroke-width="0.5"/><path d="M150.79999999999998 32.61v-1a1.3 1.3 0 0 1 2.6 0v1" fill="none" stroke="#3a4054" stroke-width="0.75"/><circle cx="194.3" cy="33.01" r="2.2" fill="#bcd426" stroke="#8a9c18" stroke-width="0.5"/><circle cx="194.3" cy="33.01" r="0.9" fill="#f4f8c8"/><rect x="221" y="32.50" width="6.2" height="1" fill="#484848"/><path d="M339.4 31.41a1.8 1.8 0 0 0 0 3.6z" fill="#555"/><rect x="49.80000000000001" y="38.74" width="6.8" height="6.2" fill="#f000f0" stroke="#3c3c3c" stroke-width="0.75"/><circle cx="119.19999999999999" cy="40.84" r="1.9" fill="#f3f08c" stroke="#b9b560" stroke-width="0.4"/><rect x="118.39999999999999" y="42.74" width="1.6" height="1.8" fill="#77776a"/><rect x="148.39999999999998" y="41.44" width="3.2" height="2.8" fill="#f6eec8" stroke="#c4a458" stroke-width="0.5"/><path d="M150.79999999999998 41.44v-1a1.3 1.3 0 0 1 2.6 0v1" fill="none" stroke="#3a4054" stroke-width="0.75"/><circle cx="194.3" cy="41.84" r="2.2" fill="#bcd426" stroke="#8a9c18" stroke-width="0.5"/><circle cx="194.3" cy="41.84" r="0.9" fill="#f4f8c8"/><rect x="221" y="41.50" width="6.2" height="1" fill="#484848"/><path d="M339.4 40.24a1.8 1.8 0 0 0 0 3.6z" fill="#555"/><rect x="49.80000000000001" y="47.57" width="6.8" height="6.2" fill="#fff" stroke="#3c3c3c" stroke-width="0.75"/><circle cx="119.19999999999999" cy="49.67" r="1.9" fill="#f3f08c" stroke="#b9b560" stroke-width="0.4"/><rect x="118.39999999999999" y="51.57" width="1.6" height="1.8" fill="#77776a"/><rect x="148.39999999999998" y="50.27" width="3.2" height="2.8" fill="#f6eec8" stroke="#c4a458" stroke-width="0.5"/><path d="M150.79999999999998 50.27v-1a1.3 1.3 0 0 1 2.6 0v1" fill="none" stroke="#3a4054" stroke-width="0.75"/><circle cx="194.3" cy="50.67" r="2.2" fill="#bcd426" stroke="#8a9c18" stroke-width="0.5"/><circle cx="194.3" cy="50.67" r="0.9" fill="#f4f8c8"/><rect x="221" y="50.50" width="6.2" height="1" fill="#484848"/><path d="M339.4 49.07a1.8 1.8 0 0 0 0 3.6z" fill="#555"/><rect x="49.80000000000001" y="56.40" width="6.8" height="6.2" fill="#d8d8d8" stroke="#3c3c3c" stroke-width="0.75"/><circle cx="119.19999999999999" cy="58.50" r="1.9" fill="#f3f08c" stroke="#b9b560" stroke-width="0.4"/><rect x="118.39999999999999" y="60.40" width="1.6" height="1.8" fill="#77776a"/><rect x="148.39999999999998" y="59.10" width="3.2" height="2.8" fill="#f6eec8" stroke="#c4a458" stroke-width="0.5"/><path d="M150.79999999999998 59.10v-1a1.3 1.3 0 0 1 2.6 0v1" fill="none" stroke="#3a4054" stroke-width="0.75"/><circle cx="194.3" cy="59.50" r="2.2" fill="#bcd426" stroke="#8a9c18" stroke-width="0.5"/><circle cx="194.3" cy="59.50" r="0.9" fill="#f4f8c8"/><rect x="221" y="58.50" width="6.2" height="1" fill="#3a3a3a"/><path d="M339.4 57.90a1.8 1.8 0 0 0 0 3.6z" fill="#555"/><rect x="49.80000000000001" y="65.23" width="6.8" height="6.2" fill="#fff" stroke="#3c3c3c" stroke-width="0.75"/><circle cx="119.19999999999999" cy="67.33" r="1.9" fill="#f3f08c" stroke="#b9b560" stroke-width="0.4"/><rect x="118.39999999999999" y="69.23" width="1.6" height="1.8" fill="#77776a"/><rect x="148.39999999999998" y="67.93" width="3.2" height="2.8" fill="#f6eec8" stroke="#c4a458" stroke-width="0.5"/><path d="M150.79999999999998 67.93v-1a1.3 1.3 0 0 1 2.6 0v1" fill="none" stroke="#3a4054" stroke-width="0.75"/><circle cx="194.3" cy="68.33" r="2.2" fill="#bcd426" stroke="#8a9c18" stroke-width="0.5"/><circle cx="194.3" cy="68.33" r="0.9" fill="#f4f8c8"/><rect x="221" y="67.50" width="6.2" height="1" fill="#484848"/><path d="M339.4 66.73a1.8 1.8 0 0 0 0 3.6z" fill="#555"/><rect x="49.80000000000001" y="74.06" width="6.8" height="6.2" fill="#adadad" stroke="#3c3c3c" stroke-width="0.75"/><circle cx="119.19999999999999" cy="76.16" r="1.9" fill="#f3f08c" stroke="#b9b560" stroke-width="0.4"/><rect x="118.39999999999999" y="78.06" width="1.6" height="1.8" fill="#77776a"/><rect x="148.39999999999998" y="76.76" width="3.2" height="2.8" fill="#f6eec8" stroke="#c4a458" stroke-width="0.5"/><path d="M150.79999999999998 76.76v-1a1.3 1.3 0 0 1 2.6 0v1" fill="none" stroke="#3a4054" stroke-width="0.75"/><circle cx="194.3" cy="77.16" r="2.2" fill="#bcd426" stroke="#8a9c18" stroke-width="0.5"/><circle cx="194.3" cy="77.16" r="0.9" fill="#f4f8c8"/><rect x="221" y="76.50" width="6.2" height="1" fill="#484848"/><path d="M339.4 75.56a1.8 1.8 0 0 0 0 3.6z" fill="#555"/><rect x="49.80000000000001" y="82.89" width="6.8" height="6.2" fill="#adadad" stroke="#3c3c3c" stroke-width="0.75"/><circle cx="119.19999999999999" cy="84.99" r="1.9" fill="#f3f08c" stroke="#b9b560" stroke-width="0.4"/><rect x="118.39999999999999" y="86.89" width="1.6" height="1.8" fill="#77776a"/><rect x="148.39999999999998" y="85.59" width="3.2" height="2.8" fill="#f6eec8" stroke="#c4a458" stroke-width="0.5"/><path d="M150.79999999999998 85.59v-1a1.3 1.3 0 0 1 2.6 0v1" fill="none" stroke="#3a4054" stroke-width="0.75"/><circle cx="194.3" cy="85.99" r="2.2" fill="#bcd426" stroke="#8a9c18" stroke-width="0.5"/><circle cx="194.3" cy="85.99" r="0.9" fill="#f4f8c8"/><rect x="221" y="85.50" width="6.2" height="1" fill="#484848"/><path d="M339.4 84.39a1.8 1.8 0 0 0 0 3.6z" fill="#555"/><rect x="49.80000000000001" y="91.72" width="6.8" height="6.2" fill="#fff" stroke="#3c3c3c" stroke-width="0.75"/><circle cx="119.19999999999999" cy="93.82" r="1.9" fill="#f3f08c" stroke="#b9b560" stroke-width="0.4"/><rect x="118.39999999999999" y="95.72" width="1.6" height="1.8" fill="#77776a"/><rect x="148.39999999999998" y="94.42" width="3.2" height="2.8" fill="#f6eec8" stroke="#c4a458" stroke-width="0.5"/><path d="M150.79999999999998 94.42v-1a1.3 1.3 0 0 1 2.6 0v1" fill="none" stroke="#3a4054" stroke-width="0.75"/><circle cx="194.3" cy="94.82" r="2.2" fill="#bcd426" stroke="#8a9c18" stroke-width="0.5"/><circle cx="194.3" cy="94.82" r="0.9" fill="#f4f8c8"/><rect x="221" y="94.50" width="6.2" height="1" fill="#484848"/><path d="M339.4 93.22a1.8 1.8 0 0 0 0 3.6z" fill="#555"/><rect x="49.80000000000001" y="100.55" width="6.8" height="6.2" fill="#fff" stroke="#3c3c3c" stroke-width="0.75"/><circle cx="119.19999999999999" cy="102.65" r="1.9" fill="#f3f08c" stroke="#b9b560" stroke-width="0.4"/><rect x="118.39999999999999" y="104.55" width="1.6" height="1.8" fill="#77776a"/><rect x="148.39999999999998" y="103.25" width="3.2" height="2.8" fill="#f6eec8" stroke="#c4a458" stroke-width="0.5"/><path d="M150.79999999999998 103.25v-1a1.3 1.3 0 0 1 2.6 0v1" fill="none" stroke="#3a4054" stroke-width="0.75"/><circle cx="194.3" cy="103.65" r="2.2" fill="#bcd426" stroke="#8a9c18" stroke-width="0.5"/><circle cx="194.3" cy="103.65" r="0.9" fill="#f4f8c8"/><rect x="221" y="103.50" width="6.2" height="1" fill="#484848"/><path d="M339.4 102.05a1.8 1.8 0 0 0 0 3.6z" fill="#555"/><rect x="49.80000000000001" y="109.38" width="6.8" height="6.2" fill="#fff" stroke="#3c3c3c" stroke-width="0.75"/><circle cx="119.19999999999999" cy="111.48" r="1.9" fill="#f3f08c" stroke="#b9b560" stroke-width="0.4"/><rect x="118.39999999999999" y="113.38" width="1.6" height="1.8" fill="#77776a"/><rect x="148.39999999999998" y="112.08" width="3.2" height="2.8" fill="#f6eec8" stroke="#c4a458" stroke-width="0.5"/><path d="M150.79999999999998 112.08v-1a1.3 1.3 0 0 1 2.6 0v1" fill="none" stroke="#3a4054" stroke-width="0.75"/><circle cx="194.3" cy="112.48" r="2.2" fill="#bcd426" stroke="#8a9c18" stroke-width="0.5"/><circle cx="194.3" cy="112.48" r="0.9" fill="#f4f8c8"/><rect x="221" y="111.50" width="6.2" height="1" fill="#484848"/><path d="M339.4 110.88a1.8 1.8 0 0 0 0 3.6z" fill="#555"/><rect x="49.80000000000001" y="118.21" width="6.8" height="6.2" fill="#fff" stroke="#3c3c3c" stroke-width="0.75"/><circle cx="119.19999999999999" cy="120.31" r="1.9" fill="#f3f08c" stroke="#b9b560" stroke-width="0.4"/><rect x="118.39999999999999" y="122.21" width="1.6" height="1.8" fill="#77776a"/><rect x="148.39999999999998" y="120.91" width="3.2" height="2.8" fill="#f6eec8" stroke="#c4a458" stroke-width="0.5"/><path d="M150.79999999999998 120.91v-1a1.3 1.3 0 0 1 2.6 0v1" fill="none" stroke="#3a4054" stroke-width="0.75"/><circle cx="194.3" cy="121.31" r="2.2" fill="#bcd426" stroke="#8a9c18" stroke-width="0.5"/><circle cx="194.3" cy="121.31" r="0.9" fill="#f4f8c8"/><rect x="221" y="120.50" width="6.2" height="1" fill="#484848"/><path d="M339.4 119.71a1.8 1.8 0 0 0 0 3.6z" fill="#555"/><rect x="49.80000000000001" y="127.04" width="6.8" height="6.2" fill="#1010d8" stroke="#3c3c3c" stroke-width="0.75"/><circle cx="119.19999999999999" cy="129.14" r="1.9" fill="#f3f08c" stroke="#b9b560" stroke-width="0.4"/><rect x="118.39999999999999" y="131.04" width="1.6" height="1.8" fill="#77776a"/><rect x="148.39999999999998" y="129.74" width="3.2" height="2.8" fill="#f6eec8" stroke="#c4a458" stroke-width="0.5"/><path d="M150.79999999999998 129.74v-1a1.3 1.3 0 0 1 2.6 0v1" fill="none" stroke="#3a4054" stroke-width="0.75"/><circle cx="194.3" cy="130.14" r="2.2" fill="#bcd426" stroke="#8a9c18" stroke-width="0.5"/><circle cx="194.3" cy="130.14" r="0.9" fill="#f4f8c8"/><rect x="221" y="129.50" width="6.2" height="1" fill="#484848"/><path d="M339.4 128.54a1.8 1.8 0 0 0 0 3.6z" fill="#555"/><rect x="49.80000000000001" y="135.87" width="6.8" height="6.2" fill="#fff" stroke="#3c3c3c" stroke-width="0.75"/><circle cx="119.19999999999999" cy="137.97" r="1.9" fill="#f3f08c" stroke="#b9b560" stroke-width="0.4"/><rect x="118.39999999999999" y="139.87" width="1.6" height="1.8" fill="#77776a"/><rect x="148.39999999999998" y="138.57" width="3.2" height="2.8" fill="#f6eec8" stroke="#c4a458" stroke-width="0.5"/><path d="M150.79999999999998 138.57v-1a1.3 1.3 0 0 1 2.6 0v1" fill="none" stroke="#3a4054" stroke-width="0.75"/><circle cx="194.3" cy="138.97" r="2.2" fill="#bcd426" stroke="#8a9c18" stroke-width="0.5"/><circle cx="194.3" cy="138.97" r="0.9" fill="#f4f8c8"/><rect x="221" y="138.50" width="6.2" height="1" fill="#484848"/><path d="M339.4 137.37a1.8 1.8 0 0 0 0 3.6z" fill="#555"/><rect x="49.80000000000001" y="144.70" width="6.8" height="6.2" fill="#fff" stroke="#3c3c3c" stroke-width="0.75"/><circle cx="119.19999999999999" cy="146.80" r="1.9" fill="#f3f08c" stroke="#b9b560" stroke-width="0.4"/><rect x="118.39999999999999" y="148.70" width="1.6" height="1.8" fill="#77776a"/><rect x="148.39999999999998" y="147.40" width="3.2" height="2.8" fill="#f6eec8" stroke="#c4a458" stroke-width="0.5"/><path d="M150.79999999999998 147.40v-1a1.3 1.3 0 0 1 2.6 0v1" fill="none" stroke="#3a4054" stroke-width="0.75"/><circle cx="194.3" cy="147.80" r="2.2" fill="#bcd426" stroke="#8a9c18" stroke-width="0.5"/><circle cx="194.3" cy="147.80" r="0.9" fill="#f4f8c8"/><rect x="221" y="147.50" width="6.2" height="1" fill="#484848"/><path d="M339.4 146.20a1.8 1.8 0 0 0 0 3.6z" fill="#555"/><rect x="49.80000000000001" y="153.53" width="6.8" height="6.2" fill="#fff" stroke="#3c3c3c" stroke-width="0.75"/><circle cx="119.19999999999999" cy="155.63" r="1.9" fill="#f3f08c" stroke="#b9b560" stroke-width="0.4"/><rect x="118.39999999999999" y="157.53" width="1.6" height="1.8" fill="#77776a"/><rect x="148.39999999999998" y="156.23" width="3.2" height="2.8" fill="#f6eec8" stroke="#c4a458" stroke-width="0.5"/><path d="M150.79999999999998 156.23v-1a1.3 1.3 0 0 1 2.6 0v1" fill="none" stroke="#3a4054" stroke-width="0.75"/><circle cx="194.3" cy="156.63" r="2.2" fill="#bcd426" stroke="#8a9c18" stroke-width="0.5"/><circle cx="194.3" cy="156.63" r="0.9" fill="#f4f8c8"/><rect x="221" y="156.50" width="6.2" height="1" fill="#484848"/><path d="M339.4 155.03a1.8 1.8 0 0 0 0 3.6z" fill="#555"/><rect x="49.80000000000001" y="162.36" width="6.8" height="6.2" fill="#fff" stroke="#3c3c3c" stroke-width="0.75"/><circle cx="119.19999999999999" cy="164.46" r="1.9" fill="#f3f08c" stroke="#b9b560" stroke-width="0.4"/><rect x="118.39999999999999" y="166.36" width="1.6" height="1.8" fill="#77776a"/><rect x="148.39999999999998" y="165.06" width="3.2" height="2.8" fill="#f6eec8" stroke="#c4a458" stroke-width="0.5"/><path d="M150.79999999999998 165.06v-1a1.3 1.3 0 0 1 2.6 0v1" fill="none" stroke="#3a4054" stroke-width="0.75"/><circle cx="194.3" cy="165.46" r="2.2" fill="#bcd426" stroke="#8a9c18" stroke-width="0.5"/><circle cx="194.3" cy="165.46" r="0.9" fill="#f4f8c8"/><rect x="221" y="164.50" width="6.2" height="1" fill="#484848"/><path d="M339.4 163.86a1.8 1.8 0 0 0 0 3.6z" fill="#555"/><rect x="49.80000000000001" y="171.19" width="6.8" height="6.2" fill="#fff" stroke="#3c3c3c" stroke-width="0.75"/><circle cx="119.19999999999999" cy="173.29" r="1.9" fill="#f3f08c" stroke="#b9b560" stroke-width="0.4"/><rect x="118.39999999999999" y="175.19" width="1.6" height="1.8" fill="#77776a"/><rect x="148.39999999999998" y="173.89" width="3.2" height="2.8" fill="#f6eec8" stroke="#c4a458" stroke-width="0.5"/><path d="M150.79999999999998 173.89v-1a1.3 1.3 0 0 1 2.6 0v1" fill="none" stroke="#3a4054" stroke-width="0.75"/><circle cx="194.3" cy="174.29" r="2.2" fill="#bcd426" stroke="#8a9c18" stroke-width="0.5"/><circle cx="194.3" cy="174.29" r="0.9" fill="#f4f8c8"/><rect x="221" y="173.50" width="6.2" height="1" fill="#484848"/><path d="M339.4 172.69a1.8 1.8 0 0 0 0 3.6z" fill="#555"/><rect x="49.80000000000001" y="180.02" width="6.8" height="6.2" fill="#fff" stroke="#3c3c3c" stroke-width="0.75"/><circle cx="119.19999999999999" cy="182.12" r="1.9" fill="#f3f08c" stroke="#b9b560" stroke-width="0.4"/><rect x="118.39999999999999" y="184.02" width="1.6" height="1.8" fill="#77776a"/><rect x="148.39999999999998" y="182.72" width="3.2" height="2.8" fill="#f6eec8" stroke="#c4a458" stroke-width="0.5"/><path d="M150.79999999999998 182.72v-1a1.3 1.3 0 0 1 2.6 0v1" fill="none" stroke="#3a4054" stroke-width="0.75"/><circle cx="194.3" cy="183.12" r="2.2" fill="#bcd426" stroke="#8a9c18" stroke-width="0.5"/><circle cx="194.3" cy="183.12" r="0.9" fill="#f4f8c8"/><rect x="221" y="182.50" width="6.2" height="1" fill="#484848"/><path d="M339.4 181.52a1.8 1.8 0 0 0 0 3.6z" fill="#555"/></svg>
</div>
<div class="a" style="left:651.60px;top:91.00px;width:4.90px;height:183.40px;background:#f0f0f0;"></div>
<div class="a" style="left:652.20px;top:100.80px;width:3.80px;height:27.40px;background:#c1c1c1;"></div>
<div class="a" style="left:311.00px;top:274.40px;width:340.60px;height:5.80px;background:#f0f0f0;"></div>
<div class="a" style="left:318.00px;top:275.20px;width:284.00px;height:4.20px;background:#c6c6c6;"></div>
<svg class="a" style="left:0;top:0" width="768" height="300" viewBox="0 0 768 300"><path d="M652.8 97l1.3-1.4 1.3 1.4M652.8 270.4l1.3 1.4 1.3-1.4" fill="none" stroke="#555" stroke-width="0.6"/><path d="M315 276l-1.4 1.3 1.4 1.3M647 276l1.4 1.3-1.4 1.3" fill="none" stroke="#555" stroke-width="0.6"/><path d="M309 184.8l-1.6 1.3 1.6 1.3z" fill="#222"/><path d="M339.4 123.4v8l1.8-1.7 1.3 3 1.1-.5-1.3-3h2.6z" fill="#fff" stroke="#111" stroke-width="0.55"/></svg>
<div class="t" style="left:185.40px;top:285px;font-size:4.7px;color:#222;">Processed 108 item(s), Total 115 item(s), Hidden 7 item(s).</div>
</div><div id="ov"></div></body></html>
